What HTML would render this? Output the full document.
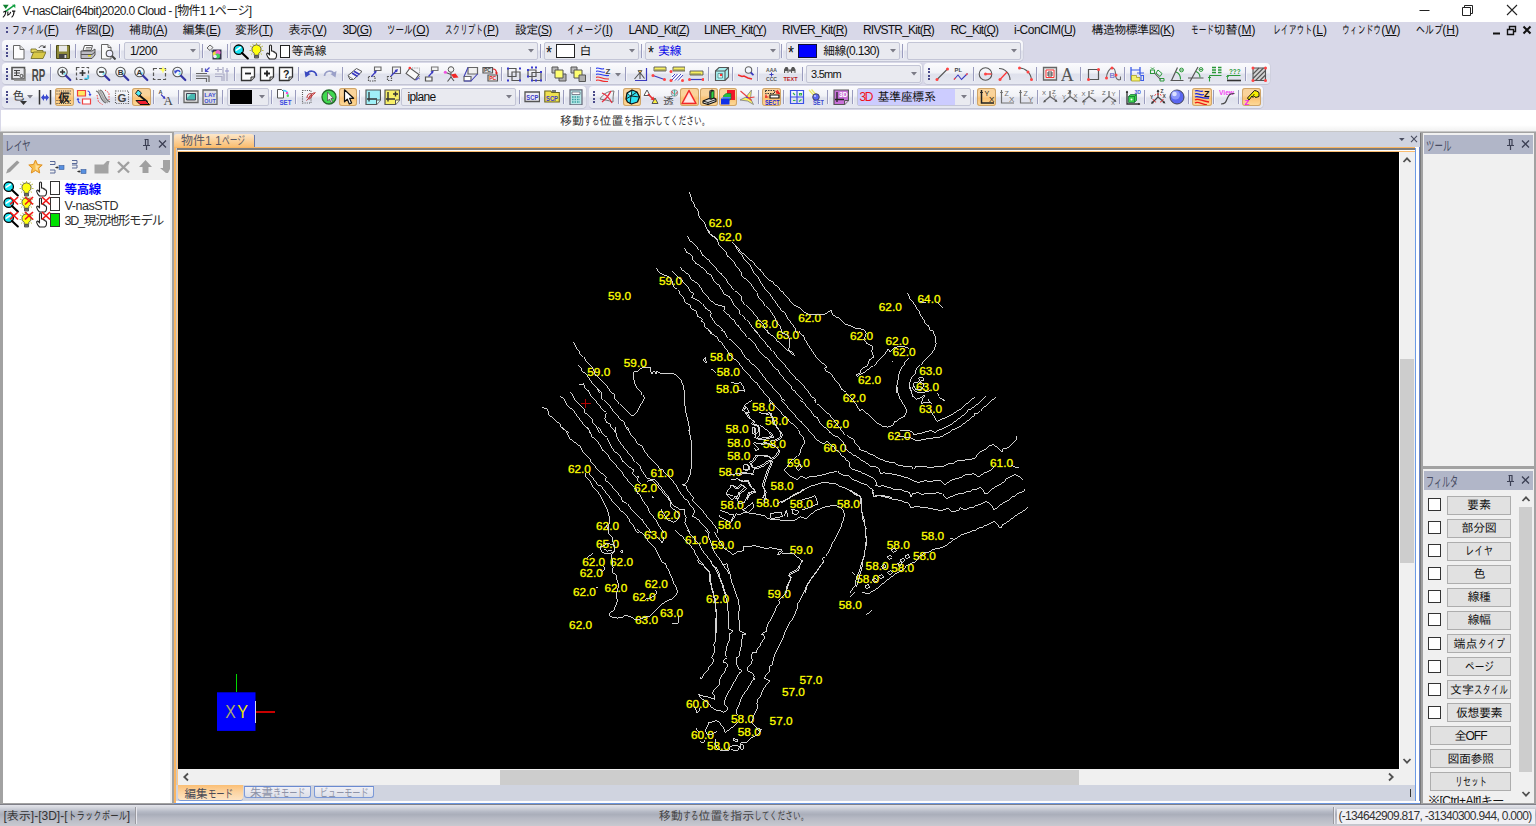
<!DOCTYPE html><html><head><meta charset="utf-8"><title>V-nasClair</title><style>html,body{margin:0;padding:0}body{width:1536px;height:826px;position:relative;overflow:hidden;background:#d8d8e8;font-family:'Liberation Sans','IPAGothic',sans-serif}</style></head><body>
<div style="position:absolute;left:0px;top:0px;width:1536px;height:22px;background:#fff"></div>
<svg style="position:absolute;left:2px;top:3.500px" width="15" height="14.200" viewBox="0 0 18 17"><path d="M1 1h7L4.500 6z" fill="#108030"/><path d="M3.500 9.500L15.500 1" stroke="#10a040" stroke-width="1.800"/><path d="M12 1h4v4z" fill="#10a040"/><path d="M1.500 10l3-1.500M4.500 8.500c0 4-1 6-3.500 7.500M7 9v4.500c2-.5 3-2 3.500-4M12 8.500h4M14.500 8.500c0 4-1 6-3 7.500" stroke="#111" stroke-width="1.300" fill="none"/></svg>
<div id="t1" style="position:absolute;left:22.5px;top:3.1999999999999993px;font:12px/16px 'Liberation Sans','Noto Sans CJK JP',sans-serif;color:#1c1c1c;white-space:nowrap;letter-spacing:-0.608px;">V-nasClair(64bit)2020.0 Cloud - [物件1 1ページ]</div>
<svg style="position:absolute;left:1410px;top:0" width="126" height="22" viewBox="0 0 126 22"><path d="M9.5 10.5h10" stroke="#222" fill="none"/><path d="M52.5 7.5h8v8h-8zM54.5 7.5v-2h8v8h-2" stroke="#222" fill="none"/><path d="M97 5l10 10M107 5l-10 10" stroke="#222" fill="none" stroke-width="1.1"/></svg>
<div style="position:absolute;left:6px;top:27px;width:2px;height:2px;background:#4a4a8a"></div>
<div style="position:absolute;left:6px;top:31px;width:2px;height:2px;background:#4a4a8a"></div>
<div id="t2" style="position:absolute;left:12px;top:21.7px;font:12px/16px 'Liberation Sans','IPAGothic',sans-serif;color:#111;white-space:nowrap;"><span style="display:inline-block;transform:scaleX(0.6595);transform-origin:0 50%;margin-right:-16.344px">ファイル</span>(<u>F</u>)</div>
<div id="t3" style="position:absolute;left:75px;top:21.7px;font:12px/16px 'Liberation Sans','IPAGothic',sans-serif;color:#111;white-space:nowrap;letter-spacing:-0.334px;">作図(<u>D</u>)</div>
<div id="t4" style="position:absolute;left:129px;top:21.7px;font:12px/16px 'Liberation Sans','IPAGothic',sans-serif;color:#111;white-space:nowrap;letter-spacing:-0.303px;">補助(<u>A</u>)</div>
<div id="t5" style="position:absolute;left:182.5px;top:21.7px;font:12px/16px 'Liberation Sans','IPAGothic',sans-serif;color:#111;white-space:nowrap;letter-spacing:-0.403px;">編集(<u>E</u>)</div>
<div id="t6" style="position:absolute;left:235px;top:21.7px;font:12px/16px 'Liberation Sans','IPAGothic',sans-serif;color:#111;white-space:nowrap;letter-spacing:-0.269px;">変形(<u>T</u>)</div>
<div id="t7" style="position:absolute;left:288.5px;top:21.7px;font:12px/16px 'Liberation Sans','IPAGothic',sans-serif;color:#111;white-space:nowrap;letter-spacing:-0.403px;">表示(<u>V</u>)</div>
<div id="t8" style="position:absolute;left:342.5px;top:21.7px;font:12px/16px 'Liberation Sans','IPAGothic',sans-serif;color:#111;white-space:nowrap;letter-spacing:-0.738px;">3D(<u>G</u>)</div>
<div id="t9" style="position:absolute;left:386.5px;top:21.7px;font:12px/16px 'Liberation Sans','IPAGothic',sans-serif;color:#111;white-space:nowrap;"><span style="display:inline-block;transform:scaleX(0.7127);transform-origin:0 50%;margin-right:-10.344px">ツール</span>(<u>O</u>)</div>
<div id="t10" style="position:absolute;left:445px;top:21.7px;font:12px/16px 'Liberation Sans','IPAGothic',sans-serif;color:#111;white-space:nowrap;"><span style="display:inline-block;transform:scaleX(0.6331);transform-origin:0 50%;margin-right:-22.016px">スクリプト</span>(<u>P</u>)</div>
<div id="t11" style="position:absolute;left:515px;top:21.7px;font:12px/16px 'Liberation Sans','IPAGothic',sans-serif;color:#111;white-space:nowrap;letter-spacing:-0.703px;">設定(<u>S</u>)</div>
<div id="t12" style="position:absolute;left:566.5px;top:21.7px;font:12px/16px 'Liberation Sans','IPAGothic',sans-serif;color:#111;white-space:nowrap;"><span style="display:inline-block;transform:scaleX(0.7324);transform-origin:0 50%;margin-right:-12.844px">イメージ</span>(<u>I</u>)</div>
<div id="t13" style="position:absolute;left:628.5px;top:21.7px;font:12px/16px 'Liberation Sans','IPAGothic',sans-serif;color:#111;white-space:nowrap;letter-spacing:-0.685px;">LAND_Kit(<u>Z</u>)</div>
<div id="t14" style="position:absolute;left:704px;top:21.7px;font:12px/16px 'Liberation Sans','IPAGothic',sans-serif;color:#111;white-space:nowrap;letter-spacing:-0.837px;">LINER_Kit(<u>Y</u>)</div>
<div id="t15" style="position:absolute;left:782px;top:21.7px;font:12px/16px 'Liberation Sans','IPAGothic',sans-serif;color:#111;white-space:nowrap;letter-spacing:-0.753px;">RIVER_Kit(<u>R</u>)</div>
<div id="t16" style="position:absolute;left:863px;top:21.7px;font:12px/16px 'Liberation Sans','IPAGothic',sans-serif;color:#111;white-space:nowrap;letter-spacing:-0.797px;">RIVSTR_Kit(<u>R</u>)</div>
<div id="t17" style="position:absolute;left:950.5px;top:21.7px;font:12px/16px 'Liberation Sans','IPAGothic',sans-serif;color:#111;white-space:nowrap;letter-spacing:-0.873px;">RC_Kit(<u>Q</u>)</div>
<div id="t18" style="position:absolute;left:1014px;top:21.7px;font:12px/16px 'Liberation Sans','IPAGothic',sans-serif;color:#111;white-space:nowrap;letter-spacing:-0.531px;">i-ConCIM(<u>U</u>)</div>
<div id="t19" style="position:absolute;left:1091.5px;top:21.7px;font:12px/16px 'Liberation Sans','IPAGothic',sans-serif;color:#111;white-space:nowrap;letter-spacing:-0.613px;">構造物標準図(<u>K</u>)</div>
<div id="t20" style="position:absolute;left:1190.5px;top:21.7px;font:12px/16px 'Liberation Sans','IPAGothic',sans-serif;color:#111;white-space:nowrap;"><span style="display:inline-block;transform:scaleX(0.6389);transform-origin:0 50%;margin-right:-13.000px">モード</span>切替(<u>M</u>)</div>
<div id="t21" style="position:absolute;left:1273px;top:21.7px;font:12px/16px 'Liberation Sans','IPAGothic',sans-serif;color:#111;white-space:nowrap;"><span style="display:inline-block;transform:scaleX(0.6552);transform-origin:0 50%;margin-right:-20.687px">レイアウト</span>(<u>L</u>)</div>
<div id="t22" style="position:absolute;left:1342px;top:21.7px;font:12px/16px 'Liberation Sans','IPAGothic',sans-serif;color:#111;white-space:nowrap;"><span style="display:inline-block;transform:scaleX(0.6529);transform-origin:0 50%;margin-right:-20.828px">ウィンドウ</span>(<u>W</u>)</div>
<div id="t23" style="position:absolute;left:1415.5px;top:21.7px;font:12px/16px 'Liberation Sans','IPAGothic',sans-serif;color:#111;white-space:nowrap;"><span style="display:inline-block;transform:scaleX(0.7452);transform-origin:0 50%;margin-right:-9.172px">ヘルプ</span>(<u>H</u>)</div>
<svg style="position:absolute;left:1488px;top:23px" width="48" height="16" viewBox="0 0 48 16"><path d="M5 10.5h7" stroke="#111" stroke-width="2" fill="none"/><path d="M19.5 6.5h6v5h-6zM21.5 6v-2.500h6v5h-2" stroke="#111" stroke-width="1.4" fill="none"/><path d="M35.5 3.500l7 7M42.500 3.500l-7 7" stroke="#111" stroke-width="2" fill="none"/></svg>
<div style="position:absolute;left:2px;top:39.6px;width:1021px;height:21.5px;border-radius:4px;background:linear-gradient(#fbfbfd 0%,#f1f2f7 45%,#dfe1ec 55%,#e6e8f1 100%);box-shadow:0 1px 0 #c2c4d4, 1px 0 0 #cfd0de;"></div>
<div style="position:absolute;left:6px;top:44.5px;width:2px;height:2px;background:#4a4a8a"></div>
<div style="position:absolute;left:6px;top:48.0px;width:2px;height:2px;background:#4a4a8a"></div>
<div style="position:absolute;left:6px;top:51.5px;width:2px;height:2px;background:#4a4a8a"></div>
<div style="position:absolute;left:6px;top:55.0px;width:2px;height:2px;background:#4a4a8a"></div>
<svg style="position:absolute;left:10.5px;top:44px" width="16" height="16" viewBox="0 0 16 16"><path d="M2.500 1.500h6.500l4 4v9.500h-10.500z" fill="#fdfdfd" stroke="#666"/><path d="M9 1.500v4h4" fill="#ddd" stroke="#666"/></svg>
<svg style="position:absolute;left:30px;top:44px" width="16" height="16" viewBox="0 0 16 16"><path d="M1 5h5l1 1.500h6v2H1z" fill="#e8d860" stroke="#6a6420" stroke-width=".8"/><path d="M1 14.500L3.500 8h12.500L13 14.500z" fill="#d8c848" stroke="#6a6420" stroke-width=".8"/><path d="M9 4c1-2.500 4-3 5.500-1" stroke="#444" fill="none"/><path d="M15.500 1v3h-3z" fill="#444"/></svg>
<svg style="position:absolute;left:55px;top:44px" width="16" height="16" viewBox="0 0 16 16"><path d="M1.500 1.500h13v13h-13z" fill="#8c8838" stroke="#4a4818"/><path d="M4 1.500h8v6H4z" fill="#e8e8e8"/><path d="M4 10h8v4.500H4z" fill="#444"/><path d="M9.500 11h1.800v3h-1.800z" fill="#ddd"/></svg>
<svg style="position:absolute;left:80px;top:44px" width="16" height="16" viewBox="0 0 16 16"><path d="M4.500 1.500h8l-1.500 5h-8z" fill="#fff" stroke="#555"/><path d="M6 3.500h5M5.500 5h5" stroke="#666" stroke-width=".8"/><path d="M1 7h11l3-2v6l-3 3.500H1z" fill="#bdbdc4" stroke="#555"/><path d="M1 10.500h11l3-2.500" stroke="#555" fill="none"/><path d="M8 11.800h3" stroke="#e8e000" stroke-width="1.300"/></svg>
<svg style="position:absolute;left:100px;top:44px" width="16" height="16" viewBox="0 0 16 16"><path d="M1.500 .5h6.500l3 3v11.500h-9.500z" fill="#fafafa" stroke="#666"/><path d="M8 .5v3h3" fill="#ddd" stroke="#666"/><circle cx="9.500" cy="9.500" r="3.300" fill="#eef" stroke="#555" stroke-width="1.100"/><path d="M12 12l3.500 3.500" stroke="#444" stroke-width="2"/></svg>
<div style="position:absolute;left:49.5px;top:44px;width:1px;height:14px;background:#9a9cbe"></div><div style="position:absolute;left:50.5px;top:44px;width:1px;height:14px;background:#f4f4fa"></div>
<div style="position:absolute;left:74.5px;top:44px;width:1px;height:14px;background:#9a9cbe"></div><div style="position:absolute;left:75.5px;top:44px;width:1px;height:14px;background:#f4f4fa"></div>
<div style="position:absolute;left:119.0px;top:44px;width:1px;height:14px;background:#9a9cbe"></div><div style="position:absolute;left:120.0px;top:44px;width:1px;height:14px;background:#f4f4fa"></div>
<div style="position:absolute;left:201.5px;top:44px;width:1px;height:14px;background:#9a9cbe"></div><div style="position:absolute;left:202.5px;top:44px;width:1px;height:14px;background:#f4f4fa"></div>
<div style="position:absolute;left:226.5px;top:44px;width:1px;height:14px;background:#9a9cbe"></div><div style="position:absolute;left:227.5px;top:44px;width:1px;height:14px;background:#f4f4fa"></div>
<div style="position:absolute;left:539.5px;top:44px;width:1px;height:14px;background:#9a9cbe"></div><div style="position:absolute;left:540.5px;top:44px;width:1px;height:14px;background:#f4f4fa"></div>
<div style="position:absolute;left:641.0px;top:44px;width:1px;height:14px;background:#9a9cbe"></div><div style="position:absolute;left:642.0px;top:44px;width:1px;height:14px;background:#f4f4fa"></div>
<div style="position:absolute;left:781.0px;top:44px;width:1px;height:14px;background:#9a9cbe"></div><div style="position:absolute;left:782.0px;top:44px;width:1px;height:14px;background:#f4f4fa"></div>
<div style="position:absolute;left:902.0px;top:44px;width:1px;height:14px;background:#9a9cbe"></div><div style="position:absolute;left:903.0px;top:44px;width:1px;height:14px;background:#f4f4fa"></div>
<div style="position:absolute;left:123.5px;top:41.5px;width:76px;height:18px;box-sizing:border-box;border:1px solid #c3c5d6;border-radius:2px;background:#e9eaf0;"></div>
<svg style="position:absolute;left:189.5px;top:49.0px" width="6" height="3.500" viewBox="0 0 6 3.500"><path d="M0 0h6L3 3.500z" fill="#7b7b86"/></svg>
<div id="t24" style="position:absolute;left:130px;top:43.0px;font:12px/16px 'Liberation Sans','IPAGothic',sans-serif;color:#111;white-space:nowrap;letter-spacing:-0.606px;">1/200</div>
<svg style="position:absolute;left:206px;top:44px" width="16" height="16" viewBox="0 0 16 16"><path d="M1 4l3-3 3 2.500-3 3z" fill="#eee" stroke="#555" stroke-width=".9"/><path d="M5.500 6.500l2 2" stroke="#36a" stroke-width="1.300"/><path d="M6.500 5.500h9v10h-9z" fill="#303048"/><circle cx="9.500" cy="10" r="2.700" fill="#f0e040"/><circle cx="12" cy="8.500" r="2.500" fill="#f060d0"/><circle cx="11.500" cy="12" r="2.500" fill="#40d060"/><circle cx="9" cy="12.500" r="1.800" fill="#e8e8ff"/></svg>
<div style="position:absolute;left:230px;top:41.5px;width:307.5px;height:18px;box-sizing:border-box;border:1px solid #c3c5d6;border-radius:2px;background:#e9eaf0;"></div>
<svg style="position:absolute;left:527.5px;top:49.0px" width="6" height="3.500" viewBox="0 0 6 3.500"><path d="M0 0h6L3 3.500z" fill="#7b7b86"/></svg>
<svg style="position:absolute;left:233px;top:43.5px" width="16" height="16" viewBox="0 0 16 16"><circle cx="5.700" cy="5.700" r="4.700" fill="#18e4f4" stroke="#000" stroke-width="1.300"/><path d="M3.300 6.200l4-2.700" stroke="#fff" stroke-width="1.600" stroke-linecap="round"/><path d="M9 9l5.800 5.500" stroke="#000" stroke-width="2.100" stroke-linecap="round"/></svg>
<svg style="position:absolute;left:248.5px;top:43px" width="16" height="16" viewBox="0 0 16 16"><path d="M1 3l1.800 1M7.500 0v1.500M14 3l-1.800 1M.5 7.500h1.500M14.500 7.500h-1.500M2 11.500l1.300-1M13 11.500l-1.300-1M3.500 .8l1 1.500M11.500 .8l-1 1.500" stroke="#b8b830" stroke-width=".9"/><path d="M7.500 1.800a4.600 4.600 0 0 1 2.300 8.600v1.800h-4.600v-1.800a4.600 4.600 0 0 1 2.300-8.600z" fill="#ffff10" stroke="#555" stroke-width=".9"/><path d="M5.500 12.500h4v2.500h-4z" fill="#999" stroke="#444" stroke-width=".8"/><path d="M5.500 13.800h4" stroke="#333" stroke-width=".7"/></svg>
<svg style="position:absolute;left:265.5px;top:43.5px" width="16" height="16" viewBox="0 0 16 16"><path d="M3.500 15c-1-1-2.500-2.500-2.800-4.500-.2-1.200 1-1.800 1.800-.8l1 1.300V2c0-1.400 2-1.400 2 0v5h.8c.8 0 1.200.3 1.300.9.900-.1 1.400.3 1.500 1 .9 0 1.400.5 1.400 1.400V12c0 1.500-.8 2.500-1.800 3z" fill="#fff" stroke="#222" stroke-width="1.100" stroke-linejoin="round"/></svg>
<div style="position:absolute;left:280px;top:44.5px;width:10px;height:13.5px;box-sizing:border-box;border:1px solid #222;background:#fff"></div>
<div id="t25" style="position:absolute;left:291.5px;top:43.2px;font:12px/16px 'Liberation Sans','IPAGothic',sans-serif;color:#111;white-space:nowrap;letter-spacing:-0.500px;">等高線</div>
<div style="position:absolute;left:543.5px;top:41.5px;width:95.5px;height:18px;box-sizing:border-box;border:1px solid #c3c5d6;border-radius:2px;background:#e9eaf0;"></div>
<svg style="position:absolute;left:629.0px;top:49.0px" width="6" height="3.500" viewBox="0 0 6 3.500"><path d="M0 0h6L3 3.500z" fill="#7b7b86"/></svg>
<div id="t26" style="position:absolute;left:545.5px;top:43.3px;font:18px/20px 'Liberation Sans','IPAGothic',sans-serif;color:#111;white-space:nowrap;transform:scaleX(.85);transform-origin:0 0;">*</div>
<div style="position:absolute;left:556px;top:44px;width:19px;height:13.5px;box-sizing:border-box;border:1px solid #222;background:#fff"></div>
<div id="t27" style="position:absolute;left:579.5px;top:43.2px;font:12px/16px 'Liberation Sans','IPAGothic',sans-serif;color:#111;white-space:nowrap;">白</div>
<div style="position:absolute;left:645px;top:41.5px;width:134.5px;height:18px;box-sizing:border-box;border:1px solid #c3c5d6;border-radius:2px;background:#e9eaf0;"></div>
<svg style="position:absolute;left:769.5px;top:49.0px" width="6" height="3.500" viewBox="0 0 6 3.500"><path d="M0 0h6L3 3.500z" fill="#7b7b86"/></svg>
<div id="t28" style="position:absolute;left:647.5px;top:43.3px;font:18px/20px 'Liberation Sans','IPAGothic',sans-serif;color:#111;white-space:nowrap;transform:scaleX(.85);transform-origin:0 0;">*</div>
<div id="t29" style="position:absolute;left:658px;top:43.2px;font:12px/16px 'Liberation Sans','IPAGothic',sans-serif;color:#0000e8;white-space:nowrap;letter-spacing:-0.500px;">実線</div>
<div style="position:absolute;left:785.5px;top:41.5px;width:114.5px;height:18px;box-sizing:border-box;border:1px solid #c3c5d6;border-radius:2px;background:#e9eaf0;"></div>
<svg style="position:absolute;left:890.0px;top:49.0px" width="6" height="3.500" viewBox="0 0 6 3.500"><path d="M0 0h6L3 3.500z" fill="#7b7b86"/></svg>
<div id="t30" style="position:absolute;left:787.5px;top:43.3px;font:18px/20px 'Liberation Sans','IPAGothic',sans-serif;color:#111;white-space:nowrap;transform:scaleX(.85);transform-origin:0 0;">*</div>
<div style="position:absolute;left:797.5px;top:44px;width:19.5px;height:13.5px;box-sizing:border-box;border:1px solid #113;background:#0000ff"></div>
<div id="t31" style="position:absolute;left:823px;top:43.2px;font:12px/16px 'Liberation Sans','IPAGothic',sans-serif;color:#111;white-space:nowrap;letter-spacing:-0.670px;">細線(0.130)</div>
<div style="position:absolute;left:906.5px;top:41.5px;width:114.5px;height:18px;box-sizing:border-box;border:1px solid #c3c5d6;border-radius:2px;background:#e9eaf0;"></div>
<svg style="position:absolute;left:1011.0px;top:49.0px" width="6" height="3.500" viewBox="0 0 6 3.500"><path d="M0 0h6L3 3.500z" fill="#7b7b86"/></svg>
<div style="position:absolute;left:2px;top:62.8px;width:920px;height:21.5px;border-radius:4px;background:linear-gradient(#fbfbfd 0%,#f1f2f7 45%,#dfe1ec 55%,#e6e8f1 100%);box-shadow:0 1px 0 #c2c4d4, 1px 0 0 #cfd0de;"></div>
<div style="position:absolute;left:6px;top:67.5px;width:2px;height:2px;background:#4a4a8a"></div>
<div style="position:absolute;left:6px;top:71.0px;width:2px;height:2px;background:#4a4a8a"></div>
<div style="position:absolute;left:6px;top:74.5px;width:2px;height:2px;background:#4a4a8a"></div>
<div style="position:absolute;left:6px;top:78.0px;width:2px;height:2px;background:#4a4a8a"></div>
<svg style="position:absolute;left:11px;top:66px" width="16" height="16" viewBox="0 0 16 16"><path d="M1 1.500h12.500v11.500H1z" fill="#e8e8ec" stroke="#555" stroke-width="1.600"/><path d="M14.200 3v11.200H3" stroke="#999" stroke-width="1.400" fill="none"/><path d="M3 4.500h6M3 7h6M5.500 4.500v5M3 9.500h5" stroke="#444" stroke-width="1.100" fill="none"/><circle cx="10.500" cy="10" r="1.600" fill="none" stroke="#444"/></svg>
<svg style="position:absolute;left:31px;top:66px" width="16" height="16" viewBox="0 0 16 16"><text x="0.8" y="15" font-family="'Liberation Sans',sans-serif" font-size="16.5" fill="#4a4a4a" font-weight="bold" textLength="13.5" lengthAdjust="spacingAndGlyphs" >RP</text></svg>
<svg style="position:absolute;left:56px;top:66px" width="16" height="16" viewBox="0 0 16 16"><circle cx="6.500" cy="6" r="4.700" fill="#f4f8fb" stroke="#555" stroke-width="1.100"/><path d="M7.500 8.500a3 3 0 0 0 2-2" stroke="#5de" stroke-width="1.200" fill="none"/><path d="M10 9.700l4.300 4.300" stroke="#3535a5" stroke-width="2.200" stroke-linecap="round"/><path d="M4 6h5M6.500 3.500v5" stroke="#333" stroke-width="1.500"/></svg>
<svg style="position:absolute;left:75px;top:66px" width="16" height="16" viewBox="0 0 16 16"><path d="M1.500 1.500h12v12h-12z" fill="none" stroke="#555" stroke-width="1.200" stroke-dasharray="3 2"/><path d="M4.500 7h6M7.500 4v6" stroke="#333" stroke-width="1.600"/><path d="M9.500 12.500h3.500v-3.500" stroke="#4ce" stroke-width="1.500" fill="none"/></svg>
<svg style="position:absolute;left:95px;top:66px" width="16" height="16" viewBox="0 0 16 16"><circle cx="6.500" cy="6" r="4.700" fill="#f4f8fb" stroke="#555" stroke-width="1.100"/><path d="M7.500 8.500a3 3 0 0 0 2-2" stroke="#5de" stroke-width="1.200" fill="none"/><path d="M10 9.700l4.300 4.300" stroke="#3535a5" stroke-width="2.200" stroke-linecap="round"/><path d="M4 6h5" stroke="#333" stroke-width="1.600"/></svg>
<svg style="position:absolute;left:114px;top:66px" width="16" height="16" viewBox="0 0 16 16"><circle cx="6.500" cy="6" r="4.700" fill="#f4f8fb" stroke="#555" stroke-width="1.100"/><path d="M7.500 8.500a3 3 0 0 0 2-2" stroke="#5de" stroke-width="1.200" fill="none"/><path d="M10 9.700l4.300 4.300" stroke="#3535a5" stroke-width="2.200" stroke-linecap="round"/><text x="3.8" y="9" font-family="'Liberation Sans',sans-serif" font-size="8" fill="#333" font-weight="bold" >B</text></svg>
<svg style="position:absolute;left:133px;top:66px" width="16" height="16" viewBox="0 0 16 16"><circle cx="6.500" cy="6" r="4.700" fill="#f4f8fb" stroke="#555" stroke-width="1.100"/><path d="M7.500 8.500a3 3 0 0 0 2-2" stroke="#5de" stroke-width="1.200" fill="none"/><path d="M10 9.700l4.300 4.300" stroke="#3535a5" stroke-width="2.200" stroke-linecap="round"/><text x="3.6" y="9" font-family="'Liberation Sans',sans-serif" font-size="8" fill="#333" font-weight="bold" >A</text></svg>
<svg style="position:absolute;left:152px;top:66px" width="16" height="16" viewBox="0 0 16 16"><path d="M1.500 2.500h12v11h-12z" fill="none" stroke="#555" stroke-width="1.200" stroke-dasharray="3.500 2"/><path d="M11 0l1 2.800 2.800 1-2.800 1-1 2.800-1-2.800-2.800-1 2.800-1z" fill="#ffff60"/></svg>
<svg style="position:absolute;left:171px;top:66px" width="16" height="16" viewBox="0 0 16 16"><circle cx="6.500" cy="6" r="4.700" fill="#f4f8fb" stroke="#555" stroke-width="1.100"/><path d="M7.500 8.500a3 3 0 0 0 2-2" stroke="#5de" stroke-width="1.200" fill="none"/><path d="M10 9.700l4.300 4.300" stroke="#3535a5" stroke-width="2.200" stroke-linecap="round"/><path d="M4.500 6.500c0-2 3.500-3 4.500-.5" stroke="#3a4ad0" stroke-width="1.500" fill="none"/><path d="M3 4.500l3.500.5-2.500 3z" fill="#3a4ad0"/></svg>
<svg style="position:absolute;left:196px;top:66px" width="16" height="16" viewBox="0 0 16 16"><path d="M0 7.500h11M0 10h13v6M0 12.500h10.500v3.500M6 2v4" stroke="#666" stroke-width="1.200" fill="none"/><path d="M13.500 1.500l-3.500 3.500M9.500 2.500v3h3" stroke="#4a4ac8" stroke-width="1.200" fill="none"/></svg>
<svg style="position:absolute;left:214px;top:66px" width="16" height="16" viewBox="0 0 16 16"><path d="M1 3.500h7M9 1v6M13 2v13M1 8h9v7M1 10.500h7v4.500M4 1v5" stroke="#a9a9c4" stroke-width="1.200" fill="none"/><path d="M11 5h4" stroke="#9a9ad0" stroke-width="1.200"/></svg>
<svg style="position:absolute;left:240px;top:66px" width="16" height="16" viewBox="0 0 16 16"><path d="M1.500 1.500h13v9.500l-3.500 3.500h-9.500z" fill="#fcfcfc" stroke="#333" stroke-width="1.300"/><path d="M14.500 11h-3.500v3.500" fill="#ccc" stroke="#333" stroke-width="1"/><path d="M5 7.500h6" stroke="#222" stroke-width="1.800"/></svg>
<svg style="position:absolute;left:259px;top:66px" width="16" height="16" viewBox="0 0 16 16"><path d="M1.500 1.500h13v9.500l-3.500 3.500h-9.500z" fill="#fcfcfc" stroke="#333" stroke-width="1.300"/><path d="M14.500 11h-3.500v3.500" fill="#ccc" stroke="#333" stroke-width="1"/><path d="M5 7.500h6M8 4.500v6" stroke="#222" stroke-width="1.800"/></svg>
<svg style="position:absolute;left:278px;top:66px" width="16" height="16" viewBox="0 0 16 16"><path d="M1.500 1.500h13v9.500l-3.500 3.500h-9.500z" fill="#fcfcfc" stroke="#333" stroke-width="1.300"/><path d="M14.500 11h-3.500v3.500" fill="#ccc" stroke="#333" stroke-width="1"/><text x="5" y="11.5" font-family="'Liberation Sans',sans-serif" font-size="10.5" fill="#222" font-weight="bold" >?</text></svg>
<svg style="position:absolute;left:303px;top:66px" width="16" height="16" viewBox="0 0 16 16"><path d="M4 8c2-4 9-4 9.500 2" stroke="#3a4ac0" stroke-width="1.700" fill="none"/><path d="M1.500 5l1 6.500 5-3.500z" fill="#3a4ac0"/></svg>
<svg style="position:absolute;left:322px;top:66px" width="16" height="16" viewBox="0 0 16 16"><path d="M12 8c-2-4-9-4-9.500 2" stroke="#9aa0c8" stroke-width="1.700" fill="none"/><path d="M14.500 5l-1 6.500-5-3.500z" fill="#9aa0c8"/></svg>
<svg style="position:absolute;left:347px;top:66px" width="16" height="16" viewBox="0 0 16 16"><path d="M1 9.500L9.500 2.500l5.500 3-8.500 8H3z" fill="#f4f4f8" stroke="#555" stroke-width="1"/><path d="M5 7l5.500 3.500M7 5.300l5.500 3.300" stroke="#3a3ac0" stroke-width="1.700"/><path d="M1.500 10l5 3.500" stroke="#888" stroke-width="1"/></svg>
<svg style="position:absolute;left:367px;top:66px" width="16" height="16" viewBox="0 0 16 16"><path d="M1.500 10.500h6.500v4.500h-6.500z" fill="none" stroke="#555" stroke-width="1.200" stroke-dasharray="1.500 1"/><path d="M7.500 1h6.500v3.500h-6.500z" fill="#f4f4f4" stroke="#666" stroke-width="1.100"/><path d="M4.500 10.500L9 5.500" stroke="#3a3ac0" stroke-width="1.200"/><path d="M9.800 4.500l-3.300 1 2.300 2.300z" fill="#3a3ac0"/></svg>
<svg style="position:absolute;left:386px;top:66px" width="16" height="16" viewBox="0 0 16 16"><path d="M1.500 10.500h4v4h-4z" fill="none" stroke="#555" stroke-width="1.200" stroke-dasharray="1.500 1"/><path d="M6.500 1h8v6.500h-8z" fill="#f4f4f4" stroke="#666" stroke-width="1.100"/><path d="M5 10l5.500-5.500" stroke="#3a3ac0" stroke-width="1.200"/><path d="M12 3l-3.500 1 2.500 2.500z" fill="#3a3ac0"/></svg>
<svg style="position:absolute;left:405px;top:66px" width="16" height="16" viewBox="0 0 16 16"><path d="M1 7.500L5 2l9 6.500-4 5.500z" fill="#fafafa" stroke="#555" stroke-width="1.100"/><path d="M5 2h9.500v12" fill="none" stroke="#888" stroke-width="1" stroke-dasharray="1 1.200"/><circle cx="4.800" cy="2" r="1.300" fill="#f33"/><path d="M11 14l3-2.500" stroke="#55c" stroke-width="1.200"/></svg>
<svg style="position:absolute;left:424px;top:66px" width="16" height="16" viewBox="0 0 16 16"><path d="M1.500 11h6.500v4h-6.500z" fill="#f4f4f4" stroke="#555" stroke-width="1.200"/><path d="M7.500 1h6.500v3.500h-6.500z" fill="#f4f4f4" stroke="#777" stroke-width="1.100"/><path d="M4.500 10.500L9 5.500" stroke="#3a3ac0" stroke-width="1.200"/><path d="M9.800 4.500l-3.300 1 2.300 2.300z" fill="#3a3ac0"/></svg>
<svg style="position:absolute;left:443px;top:66px" width="16" height="16" viewBox="0 0 16 16"><circle cx="8" cy="3.500" r="2.800" fill="#f4f4f4" stroke="#555" stroke-width="1"/><path d="M8 6.500v4.500M8 11l-3.500 4.500M8 11l3 4M3 6.500l5 2" stroke="#555" stroke-width="1.100" fill="none"/><path d="M8 8.500l4.500-1 3 4-5 .5z" fill="#f02828"/><circle cx="2.300" cy="6.300" r="1.500" fill="#f050e0"/></svg>
<svg style="position:absolute;left:463px;top:66px" width="16" height="16" viewBox="0 0 16 16"><path d="M5 1.500h9.500v6.500H5z" fill="#f0f0f0" stroke="#666" stroke-width="1.200"/><path d="M1 10.500h7v4.500H1z" fill="#fff" stroke="#666" stroke-width="1.200"/><path d="M5 1.500L1 10.500M14.500 8L8 15M1 15h7" stroke="#4040b8" stroke-width="1.100" fill="none"/></svg>
<svg style="position:absolute;left:482px;top:66px" width="16" height="16" viewBox="0 0 16 16"><path d="M1 1.500h9.500v5.500H1z" fill="#e8e8e8" stroke="#555" stroke-width="1.200"/><text x="2" y="6.3" font-family="'Liberation Sans',sans-serif" font-size="5.5" fill="#444" font-weight="bold" textLength="7" lengthAdjust="spacingAndGlyphs" >PC</text><path d="M6 9h9.500v6H6z" fill="#e8e8e8" stroke="#555" stroke-width="1.200"/><text x="7.2" y="14" font-family="'Liberation Sans',sans-serif" font-size="5.5" fill="#e02020" font-weight="bold" textLength="7" lengthAdjust="spacingAndGlyphs" >PC</text><path d="M11 3c3 0 3.500 2 3.500 4.500" stroke="#e02020" stroke-width="1.200" fill="none"/><path d="M13 6.500h3l-1.500 2.500z" fill="#e02020"/></svg>
<svg style="position:absolute;left:506px;top:66px" width="16" height="16" viewBox="0 0 16 16"><path d="M2 2.500h8v8H2z M6 6h8v8.500H6z" fill="none" stroke="#555" stroke-width="1.200"/><rect x="1" y="1.5" width="2" height="2" fill="#3a3ad0"/><rect x="13" y="1.5" width="2" height="2" fill="#3a3ad0"/><rect x="1" y="13.5" width="2" height="2" fill="#3a3ad0"/><rect x="13" y="13.5" width="2" height="2" fill="#3a3ad0"/></svg>
<svg style="position:absolute;left:526px;top:66px" width="16" height="16" viewBox="0 0 16 16"><path d="M2 4h8v6.500H2z M6 6.500h9v8H6z" fill="none" stroke="#555" stroke-width="1.200"/><rect x="1" y="3" width="2" height="2" fill="#3a3ad0"/><rect x="5" y="0.5" width="2" height="2" fill="#3a3ad0"/><rect x="9" y="0.5" width="2" height="2" fill="#3a3ad0"/><rect x="14" y="5" width="2" height="2" fill="#3a3ad0"/><rect x="14" y="13.5" width="2" height="2" fill="#3a3ad0"/><rect x="5" y="13.5" width="2" height="2" fill="#3a3ad0"/><rect x="1" y="9.5" width="2" height="2" fill="#3a3ad0"/><rect x="9" y="13.5" width="2" height="2" fill="#3a3ad0"/></svg>
<svg style="position:absolute;left:551px;top:66px" width="16" height="16" viewBox="0 0 16 16"><path d="M8 8h7v7H8z" fill="#b0b0b0" stroke="#555" stroke-width="1"/><path d="M1 1h6v6H1z" fill="#b8b8b8" stroke="#555" stroke-width="1"/><path d="M4 4h8v8H4z" fill="#ffff70" stroke="#555" stroke-width="1"/></svg>
<svg style="position:absolute;left:570px;top:66px" width="16" height="16" viewBox="0 0 16 16"><path d="M1 1h6v6H1z" fill="#b8b8b8" stroke="#555" stroke-width="1"/><path d="M4 4h8v8H4z" fill="#ffff70" stroke="#555" stroke-width="1"/><path d="M9 9h6.500v6.500H9z" fill="#b0b0b0" stroke="#555" stroke-width="1"/></svg>
<svg style="position:absolute;left:596px;top:66px" width="16" height="16" viewBox="0 0 16 16"><path d="M0 2.500c3-2 5 2 8 0M0 5.500c3-2 5 2 9 .5M0 8.500c3-2 6 2 13 1" stroke="#2a3af0" stroke-width="1.100" fill="none"/><path d="M0 11.500c3-2 6 2 13 1.500M0 14.500c3-2 6 2 12 1" stroke="#f02a2a" stroke-width="1.100" fill="none"/><text x="9.5" y="7.5" font-family="'Liberation Sans',sans-serif" font-size="8" fill="#444" font-weight="bold" >Z</text></svg>
<svg style="position:absolute;left:632px;top:66px" width="16" height="16" viewBox="0 0 16 16"><path d="M3 14.500h11.500V2" stroke="#3a3ac0" stroke-width="1.200" fill="none"/><path d="M6 4.500h4l-1 2H7z" fill="#e8b040" stroke="#555" stroke-width=".8"/><path d="M8 6.500L2.500 13M8 6.500v6.500M8 6.500l4.500 6" stroke="#555" stroke-width="1.100" fill="none"/></svg>
<svg style="position:absolute;left:651px;top:66px" width="16" height="16" viewBox="0 0 16 16"><path d="M3 1h12v4h-12z" fill="#f8f060" stroke="#555" stroke-width=".9"/><path d="M5 3v2M7 3v2M9 3v2M11 3v2M13 3v2" stroke="#555" stroke-width=".7"/><path d="M2 9.500l11.500 4" stroke="#3a3ac0" stroke-width="1.200"/><circle cx="2" cy="9.5" r="1.500" fill="#f44"/><circle cx="13.5" cy="13.5" r="1.500" fill="#f44"/></svg>
<svg style="position:absolute;left:669px;top:66px" width="16" height="16" viewBox="0 0 16 16"><path d="M4 1h12v4h-12z" fill="#f8f060" stroke="#555" stroke-width=".9"/><path d="M6 3v2M8 3v2M10 3v2M12 3v2M14 3v2" stroke="#555" stroke-width=".7"/><path d="M2.500 8h11v6.500h-11z" fill="#fff"/><path d="M3 14l5.500-6M6 14.500l6-6.500M9 14.500l5-5.500M3 11l3-3" stroke="#3a3ac0" stroke-width="1"/><circle cx="2" cy="5.5" r="1.500" fill="#f44"/><circle cx="2" cy="14.5" r="1.500" fill="#f44"/><circle cx="13.5" cy="14.5" r="1.500" fill="#f44"/></svg>
<svg style="position:absolute;left:688px;top:66px" width="16" height="16" viewBox="0 0 16 16"><path d="M2 5h13v4h-13z" fill="#f8f060" stroke="#555" stroke-width=".9"/><path d="M4 7v2M6 7v2M8 7v2M10 7v2M12 7v2" stroke="#555" stroke-width=".7"/><path d="M1.500 13.500h14" stroke="#3a3ac0" stroke-width="1.200"/><circle cx="1.5" cy="13.5" r="1.500" fill="#f44"/><circle cx="15" cy="13.5" r="1.500" fill="#f44"/></svg>
<svg style="position:absolute;left:714px;top:66px" width="16" height="16" viewBox="0 0 16 16"><path d="M1.500 5L5 1.500h9.500v9.500L11 14.500H1.500z" fill="#a8f0f0" stroke="#555" stroke-width="1.100"/><path d="M1.500 5H11v9.500M11 5l3.500-3.500" stroke="#555" stroke-width="1.100" fill="none"/><path d="M4 7.500h4.500v4.500H4z" fill="#d8ffff" stroke="#477" stroke-width=".7"/><circle cx="7" cy="9" r="1.300" fill="#f33"/></svg>
<svg style="position:absolute;left:738px;top:66px" width="16" height="16" viewBox="0 0 16 16"><circle cx="10.500" cy="4" r="3.200" fill="#f4f8ff" stroke="#666" stroke-width="1.100"/><path d="M12.800 6.500l2.700 2.700" stroke="#3a3ac0" stroke-width="1.800"/><path d="M0 9l4 1.500 2-.5 4 2 4 1" stroke="#f02a2a" stroke-width="1.500" fill="none"/></svg>
<svg style="position:absolute;left:764px;top:66px" width="16" height="16" viewBox="0 0 16 16"><text x="2" y="5.5" font-family="'Liberation Sans',sans-serif" font-size="5.5" fill="#555" font-weight="bold" textLength="11" lengthAdjust="spacingAndGlyphs" >AAA</text><text x="2" y="15" font-family="'Liberation Sans',sans-serif" font-size="5.5" fill="#555" font-weight="bold" textLength="11" lengthAdjust="spacingAndGlyphs" >CCC</text><path d="M5.500 8.500h4M7.500 6.500v4" stroke="#3a3ac0" stroke-width="1"/></svg>
<svg style="position:absolute;left:782px;top:66px" width="16" height="16" viewBox="0 0 16 16"><path d="M2 7V3.500L3.500 1h2L6.500 3v4zM9 7V3L10 1h2l1.500 2.500V7z" fill="#555"/><path d="M6.500 3.500h2.500v2H6.500z" fill="#666"/><path d="M3 5h2.500v2H3zM10 5h2.500v2H10z" fill="#ddd"/><text x="1.5" y="15" font-family="'Liberation Sans',sans-serif" font-size="6" fill="#b82020" font-weight="bold" textLength="14" lengthAdjust="spacingAndGlyphs" >TEXT</text></svg>
<div style="position:absolute;left:49.5px;top:67px;width:1px;height:14px;background:#9a9cbe"></div><div style="position:absolute;left:50.5px;top:67px;width:1px;height:14px;background:#f4f4fa"></div>
<div style="position:absolute;left:189.5px;top:67px;width:1px;height:14px;background:#9a9cbe"></div><div style="position:absolute;left:190.5px;top:67px;width:1px;height:14px;background:#f4f4fa"></div>
<div style="position:absolute;left:233.5px;top:67px;width:1px;height:14px;background:#9a9cbe"></div><div style="position:absolute;left:234.5px;top:67px;width:1px;height:14px;background:#f4f4fa"></div>
<div style="position:absolute;left:297.5px;top:67px;width:1px;height:14px;background:#9a9cbe"></div><div style="position:absolute;left:298.5px;top:67px;width:1px;height:14px;background:#f4f4fa"></div>
<div style="position:absolute;left:341.5px;top:67px;width:1px;height:14px;background:#9a9cbe"></div><div style="position:absolute;left:342.5px;top:67px;width:1px;height:14px;background:#f4f4fa"></div>
<div style="position:absolute;left:500.5px;top:67px;width:1px;height:14px;background:#9a9cbe"></div><div style="position:absolute;left:501.5px;top:67px;width:1px;height:14px;background:#f4f4fa"></div>
<div style="position:absolute;left:545.0px;top:67px;width:1px;height:14px;background:#9a9cbe"></div><div style="position:absolute;left:546.0px;top:67px;width:1px;height:14px;background:#f4f4fa"></div>
<div style="position:absolute;left:589.5px;top:67px;width:1px;height:14px;background:#9a9cbe"></div><div style="position:absolute;left:590.5px;top:67px;width:1px;height:14px;background:#f4f4fa"></div>
<div style="position:absolute;left:624.5px;top:67px;width:1px;height:14px;background:#9a9cbe"></div><div style="position:absolute;left:625.5px;top:67px;width:1px;height:14px;background:#f4f4fa"></div>
<div style="position:absolute;left:707.5px;top:67px;width:1px;height:14px;background:#9a9cbe"></div><div style="position:absolute;left:708.5px;top:67px;width:1px;height:14px;background:#f4f4fa"></div>
<div style="position:absolute;left:732.0px;top:67px;width:1px;height:14px;background:#9a9cbe"></div><div style="position:absolute;left:733.0px;top:67px;width:1px;height:14px;background:#f4f4fa"></div>
<div style="position:absolute;left:757.0px;top:67px;width:1px;height:14px;background:#9a9cbe"></div><div style="position:absolute;left:758.0px;top:67px;width:1px;height:14px;background:#f4f4fa"></div>
<div style="position:absolute;left:801.5px;top:67px;width:1px;height:14px;background:#9a9cbe"></div><div style="position:absolute;left:802.5px;top:67px;width:1px;height:14px;background:#f4f4fa"></div>
<svg style="position:absolute;left:615px;top:73px" width="6" height="3.500" viewBox="0 0 6 3.500"><path d="M0 0h6L3 3.500z" fill="#7b7b86"/></svg>
<div style="position:absolute;left:805.5px;top:64.5px;width:115px;height:18px;box-sizing:border-box;border:1px solid #c3c5d6;border-radius:2px;background:#e9eaf0;"></div>
<svg style="position:absolute;left:910.5px;top:72.0px" width="6" height="3.500" viewBox="0 0 6 3.500"><path d="M0 0h6L3 3.500z" fill="#7b7b86"/></svg>
<div id="t32" style="position:absolute;left:811px;top:66.5px;font:11px/15px 'Liberation Sans','IPAGothic',sans-serif;color:#111;white-space:nowrap;letter-spacing:-0.725px;">3.5mm</div>
<div style="position:absolute;left:924px;top:62.8px;width:345.5px;height:21.5px;border-radius:4px;background:linear-gradient(#fbfbfd 0%,#f1f2f7 45%,#dfe1ec 55%,#e6e8f1 100%);box-shadow:0 1px 0 #c2c4d4, 1px 0 0 #cfd0de;"></div>
<div style="position:absolute;left:928px;top:67.5px;width:2px;height:2px;background:#4a4a8a"></div>
<div style="position:absolute;left:928px;top:71.0px;width:2px;height:2px;background:#4a4a8a"></div>
<div style="position:absolute;left:928px;top:74.5px;width:2px;height:2px;background:#4a4a8a"></div>
<div style="position:absolute;left:928px;top:78.0px;width:2px;height:2px;background:#4a4a8a"></div>
<svg style="position:absolute;left:935px;top:66px" width="16" height="16" viewBox="0 0 16 16"><path d="M2 13.500L12.500 3" stroke="#555" stroke-width="1.100"/><circle cx="2" cy="13.5" r="1.500" fill="#f44"/><circle cx="12.5" cy="3" r="1.500" fill="#f44"/></svg>
<svg style="position:absolute;left:953px;top:66px" width="16" height="16" viewBox="0 0 16 16"><text x="1.5" y="5.5" font-family="'Liberation Sans',sans-serif" font-size="5.5" fill="#444" font-weight="bold" textLength="7.5" lengthAdjust="spacingAndGlyphs" >PL</text><path d="M1 13.500l4-4.500 3.500 4.500 6-6" stroke="#3a3ac0" stroke-width="1.100" fill="none"/><path d="M1 13.500l1.500-1.700M13 9l1.500-1.500" stroke="#f44" stroke-width="1.200"/></svg>
<svg style="position:absolute;left:978px;top:66px" width="16" height="16" viewBox="0 0 16 16"><circle cx="7.500" cy="8" r="6.300" fill="none" stroke="#555" stroke-width="1.100"/><path d="M7.500 8h6" stroke="#f33" stroke-width="1.400"/><circle cx="7.5" cy="8" r="1.500" fill="#f44"/></svg>
<svg style="position:absolute;left:997px;top:66px" width="16" height="16" viewBox="0 0 16 16"><path d="M2 2.500c6 0 11 5 11 11.500" fill="none" stroke="#555" stroke-width="1.100"/><path d="M3 13.500L10 6" stroke="#f33" stroke-width="1.200"/><circle cx="3" cy="13.5" r="1.500" fill="#f44"/></svg>
<svg style="position:absolute;left:1017px;top:66px" width="16" height="16" viewBox="0 0 16 16"><path d="M2.500 2c6 0 11.500 5 12 12" fill="none" stroke="#555" stroke-width="1.100"/><circle cx="2.5" cy="2" r="1.500" fill="#f44"/><circle cx="11" cy="6" r="1.500" fill="#f44"/><circle cx="14.5" cy="13.5" r="1.500" fill="#f44"/></svg>
<svg style="position:absolute;left:1042px;top:66px" width="16" height="16" viewBox="0 0 16 16"><path d="M1.500 1.500h13v12.500h-13z" fill="#e4e4e4" stroke="#666" stroke-width="1.300"/><path d="M4 4h8v7.500H4z" fill="#fff" stroke="#f33" stroke-width="1"/><path d="M6 6h4v4H6zM6 8h4" fill="none" stroke="#444" stroke-width="1"/></svg>
<svg style="position:absolute;left:1061px;top:66px" width="16" height="16" viewBox="0 0 16 16"><text x="-0.500" y="14.500" font-family="'Liberation Serif',serif" font-size="18.500" fill="#555">A</text></svg>
<svg style="position:absolute;left:1086px;top:66px" width="16" height="16" viewBox="0 0 16 16"><path d="M2.500 3.500h10v10h-10z" fill="none" stroke="#555" stroke-width="1.200"/><circle cx="12.5" cy="3.5" r="1.500" fill="#f44"/><circle cx="2.5" cy="13.5" r="1.500" fill="#f44"/></svg>
<svg style="position:absolute;left:1105px;top:66px" width="16" height="16" viewBox="0 0 16 16"><path d="M1.500 12c0-5 3-10 6-10s3 4 3 7 2 6 5 4.500v-3" fill="none" stroke="#666" stroke-width="1.100"/><text x="4.5" y="12" font-family="'Liberation Sans',sans-serif" font-size="8" fill="#5a5ac8" >B</text><circle cx="7" cy="2" r="1.500" fill="#f44"/><circle cx="1.5" cy="12" r="1.500" fill="#f44"/><circle cx="11" cy="9" r="1.500" fill="#f44"/></svg>
<svg style="position:absolute;left:1129px;top:66px" width="16" height="16" viewBox="0 0 16 16"><path d="M2 1v13.500M11 1v8" stroke="#3a5ae8" stroke-width="1.300"/><path d="M2 4h9M8 7h7" stroke="#3a5ae8" stroke-width="1.100"/><path d="M2.500 9.500h5v2h3.500v3.500H2.500z" fill="#f4f070" stroke="#a8a020" stroke-width=".8"/><path d="M12 9v6M14.500 9v6M11.500 9.500h3.500M11.500 14.500h3.500" stroke="#3a5ae8" stroke-width="1"/></svg>
<svg style="position:absolute;left:1149px;top:66px" width="16" height="16" viewBox="0 0 16 16"><path d="M1.500 4h4v3.500h-4z" fill="none" stroke="#2a9838" stroke-width="1.100"/><path d="M2 1.500l1.500 1.500 1.500-1.500M9 4l4 3.500-2 3-4-3.500zM11 12.500h4v2.500h-4z" fill="none" stroke="#2a9838" stroke-width="1"/><path d="M5.500 7l6 6.500" stroke="#555" stroke-width="1.100"/></svg>
<svg style="position:absolute;left:1169px;top:66px" width="16" height="16" viewBox="0 0 16 16"><path d="M1.500 14.500h13M2.500 14.500L8.500 1.500" stroke="#555" stroke-width="1.200" fill="none"/><path d="M7 6c3 1 4.500 4 4.500 7.500" stroke="#2a9838" stroke-width="1.100" fill="none"/><circle cx="12.500" cy="4" r="1.900" fill="none" stroke="#2a9838" stroke-width="1"/><path d="M11 4h3" stroke="#2a9838" stroke-width=".9"/></svg>
<svg style="position:absolute;left:1188px;top:66px" width="16" height="16" viewBox="0 0 16 16"><path d="M0 12h15.500M2 15.500L10 1" stroke="#555" stroke-width="1.200" fill="none"/><path d="M8 5.500c2.500 1 4 3 4 6" stroke="#2a9838" stroke-width="1.100" fill="none"/><circle cx="13" cy="3.500" r="1.900" fill="none" stroke="#2a9838" stroke-width="1"/><path d="M11.500 3.500h3" stroke="#2a9838" stroke-width=".9"/></svg>
<svg style="position:absolute;left:1207px;top:66px" width="16" height="16" viewBox="0 0 16 16"><path d="M2.500 9.500h12M2.500 9.500v6" stroke="#2a9838" stroke-width="1.100" fill="none"/><path d="M1 12l1.500-1.500L4 12" stroke="#2a9838" fill="none"/><path d="M5 1.500h4M5 4h4M5 6.500h4M11 1.500h3.500M11 4h3.500M11 6.500h3.500" stroke="#2a9838" stroke-width="1.300"/></svg>
<svg style="position:absolute;left:1226px;top:66px" width="16" height="16" viewBox="0 0 16 16"><text x="3" y="8" font-family="'Liberation Sans',sans-serif" font-size="7" fill="#2a9838" font-weight="bold" textLength="11.5" lengthAdjust="spacingAndGlyphs" >???</text><path d="M1.500 9.500h13" stroke="#2a9838" stroke-width="1"/><path d="M1.500 9.500v4M.3 11l1.200-1.500L2.700 11" stroke="#2a9838" stroke-width=".9" fill="none"/><path d="M1 14.500h14" stroke="#333" stroke-width="1.600"/></svg>
<svg style="position:absolute;left:1251px;top:66px" width="16" height="16" viewBox="0 0 16 16"><path d="M2 2h12.500v12.500H2z" fill="#d4d4d4" stroke="#555" stroke-width="1.100"/><path d="M2 8l6-6M2 12.500L12.500 2M4.500 14.500l10-10M9 14.500l5.500-5.500" stroke="#555" stroke-width="1.100"/><circle cx="2" cy="2" r="1.500" fill="#f44"/><circle cx="14.5" cy="2" r="1.500" fill="#f44"/><circle cx="2" cy="14.5" r="1.500" fill="#f44"/><circle cx="14.5" cy="14.5" r="1.500" fill="#f44"/></svg>
<div style="position:absolute;left:972.5px;top:67px;width:1px;height:14px;background:#9a9cbe"></div><div style="position:absolute;left:973.5px;top:67px;width:1px;height:14px;background:#f4f4fa"></div>
<div style="position:absolute;left:1036.0px;top:67px;width:1px;height:14px;background:#9a9cbe"></div><div style="position:absolute;left:1037.0px;top:67px;width:1px;height:14px;background:#f4f4fa"></div>
<div style="position:absolute;left:1079.5px;top:67px;width:1px;height:14px;background:#9a9cbe"></div><div style="position:absolute;left:1080.5px;top:67px;width:1px;height:14px;background:#f4f4fa"></div>
<div style="position:absolute;left:1124.0px;top:67px;width:1px;height:14px;background:#9a9cbe"></div><div style="position:absolute;left:1125.0px;top:67px;width:1px;height:14px;background:#f4f4fa"></div>
<div style="position:absolute;left:1245.0px;top:67px;width:1px;height:14px;background:#9a9cbe"></div><div style="position:absolute;left:1246.0px;top:67px;width:1px;height:14px;background:#f4f4fa"></div>
<div style="position:absolute;left:2px;top:86px;width:584px;height:21.5px;border-radius:4px;background:linear-gradient(#fbfbfd 0%,#f1f2f7 45%,#dfe1ec 55%,#e6e8f1 100%);box-shadow:0 1px 0 #c2c4d4, 1px 0 0 #cfd0de;"></div>
<div style="position:absolute;left:6px;top:90.5px;width:2px;height:2px;background:#4a4a8a"></div>
<div style="position:absolute;left:6px;top:94.0px;width:2px;height:2px;background:#4a4a8a"></div>
<div style="position:absolute;left:6px;top:97.5px;width:2px;height:2px;background:#4a4a8a"></div>
<div style="position:absolute;left:6px;top:101.0px;width:2px;height:2px;background:#4a4a8a"></div>
<div style="position:absolute;left:55px;top:87.5px;width:18.5px;height:18.5px;border-radius:3px;background:linear-gradient(#f8d29c 0%,#fbd49a 40%,#fbc274 58%,#fddc9c 100%);box-shadow:0 0 0 1px #cfa468 inset;"></div>
<div style="position:absolute;left:132px;top:87.5px;width:18.5px;height:18.5px;border-radius:3px;background:linear-gradient(#f8d29c 0%,#fbd49a 40%,#fbc274 58%,#fddc9c 100%);box-shadow:0 0 0 1px #cfa468 inset;"></div>
<div style="position:absolute;left:338.5px;top:87.5px;width:18.5px;height:18.5px;border-radius:3px;background:linear-gradient(#f8d29c 0%,#fbd49a 40%,#fbc274 58%,#fddc9c 100%);box-shadow:0 0 0 1px #cfa468 inset;"></div>
<div id="t33" style="position:absolute;left:12.5px;top:87.5px;font:12px/16px 'Liberation Sans','IPAGothic',sans-serif;color:#333;white-space:nowrap;">色</div>
<svg style="position:absolute;left:27px;top:95px" width="6" height="3.500" viewBox="0 0 6 3.500"><path d="M0 0h6L3 3.500z" fill="#7b7b86"/></svg>
<svg style="position:absolute;left:20px;top:101px" width="7" height="4" viewBox="0 0 7 4"><path d="M0 0h7L3.5 4z" fill="#333"/></svg>
<svg style="position:absolute;left:37px;top:89px" width="16" height="16" viewBox="0 0 16 16"><path d="M2.500 1v14.500M13.500 1v14.500" stroke="#333" stroke-width="1.500"/><path d="M4 8.500l3-3.500v2.300h2V5l3 3.500-3 3.500V9.700H7V12z" fill="#3a4ad0"/></svg>
<svg style="position:absolute;left:56px;top:89px" width="16" height="16" viewBox="0 0 16 16"><path d="M.5 2h15M.5 5h15M.5 11.500h15M.5 14.500h15" stroke="#333" stroke-width="1" stroke-dasharray="1 1.200"/><text x="2" y="12.500" font-family="'Liberation Sans','IPAGothic',sans-serif" font-size="12" font-weight="bold" fill="#222">仮</text></svg>
<svg style="position:absolute;left:76px;top:89px" width="16" height="16" viewBox="0 0 16 16"><path d="M1.500 1.500h8v5.500h-8z" fill="#ffe860" stroke="#f04040" stroke-width="1.200"/><path d="M6.500 10h8v5h-8z" fill="#fff" stroke="#f04040" stroke-width="1.200"/><path d="M11.500 2c2 0 2.500 1.500 2.500 4M4.500 14c-2 0-2.500-1.500-2.500-4" stroke="#3a4ae0" stroke-width="1.100" fill="none"/><path d="M12.500 5h3l-1.500 2.500zM.5 11h3L2 8.500z" fill="#3a4ae0"/></svg>
<svg style="position:absolute;left:95px;top:89px" width="16" height="16" viewBox="0 0 16 16"><path d="M1 2c5 1 3 9 10 12M5 1c5 1 3 9 10 12" stroke="#666" stroke-width="1.100" fill="none"/><path d="M3 1.500c5 1 3 9 10 12" stroke="#aaa" stroke-width="2" fill="none"/><path d="M10 1l4 3v7M2 6l1.500 7 4 2.500" stroke="#f04040" stroke-width="1" fill="none" stroke-dasharray="1.500 1.200"/></svg>
<svg style="position:absolute;left:114px;top:89px" width="16" height="16" viewBox="0 0 16 16"><path d="M1.500 2h13v12.500h-13z" fill="none" stroke="#555" stroke-width="1.100" stroke-dasharray="1 1.300"/><text x="3.5" y="12.5" font-family="'Liberation Sans',sans-serif" font-size="11.5" fill="#444" font-weight="bold" >G</text></svg>
<svg style="position:absolute;left:133.5px;top:89px" width="16" height="16" viewBox="0 0 16 16"><path d="M4 1l3.500 3L5 7.500 1.500 4.500z" fill="#50f0f8" stroke="#222" stroke-width="1"/><path d="M5.500 6.500l8 6.500" stroke="#111" stroke-width="2"/><path d="M2 11.500h9.500l4 4H6z" fill="#f02030" stroke="#111" stroke-width="1"/></svg>
<svg style="position:absolute;left:158px;top:89px" width="16" height="16" viewBox="0 0 16 16"><text x="0.5" y="5" font-family="'Liberation Sans',sans-serif" font-size="5.5" fill="#444" font-weight="bold" >A</text><path d="M3 5.500l3.500 3.500" stroke="#3a3ac0" stroke-width="1.100"/><path d="M7.500 10l-3-.8 2.200-2.200z" fill="#3a3ac0"/><text x="5.500" y="15.500" font-family="'Liberation Serif',serif" font-size="13" fill="#444">A</text></svg>
<svg style="position:absolute;left:183px;top:89px" width="16" height="16" viewBox="0 0 16 16"><path d="M1 2h14v11.500H1z" fill="#e4e4e4" stroke="#666" stroke-width="1.300"/><path d="M3.500 4.500h9v6.500h-9z" fill="#48b8b0" stroke="#445" stroke-width="1"/><path d="M4 5h4l-4 4z" fill="#a0e8e0"/></svg>
<svg style="position:absolute;left:202px;top:89px" width="16" height="16" viewBox="0 0 16 16"><path d="M1 1h14v14.500H1z" fill="#e0e0e4" stroke="#666" stroke-width="1.300"/><text x="2.3" y="7.5" font-family="'Liberation Sans',sans-serif" font-size="6" fill="#3a4ad0" font-weight="bold" textLength="11.5" lengthAdjust="spacingAndGlyphs" >LAY</text><text x="2.3" y="14" font-family="'Liberation Sans',sans-serif" font-size="6" fill="#3a4ad0" font-weight="bold" textLength="11.5" lengthAdjust="spacingAndGlyphs" >OUT</text></svg>
<svg style="position:absolute;left:276px;top:89px" width="16" height="16" viewBox="0 0 16 16"><path d="M1.500 .5h4l2 2v6.500h-6z" fill="#fff" stroke="#555" stroke-width="1"/><path d="M7 1.500c3 0 5 1.500 5 5" stroke="#4cf" stroke-width="1.400" fill="none"/><circle cx="11" cy="4" r="1.200" fill="#f4c"/><circle cx="11.800" cy="6.800" r="1.200" fill="#5d5"/><text x="3.5" y="15.5" font-family="'Liberation Sans',sans-serif" font-size="6.5" fill="#3a4ae0" font-weight="bold" textLength="12" lengthAdjust="spacingAndGlyphs" >SET</text></svg>
<svg style="position:absolute;left:301px;top:89px" width="16" height="16" viewBox="0 0 16 16"><path d="M1.500 1.500h8.500v12.500H1.500z" fill="none" stroke="#555" stroke-width="1.100" stroke-dasharray="1 1.200"/><path d="M6 9c0-3 2-5 4-4s0 5-2 5 3-7 6-6M5.500 11.500l9-8" stroke="#c03030" stroke-width="1" fill="none"/></svg>
<svg style="position:absolute;left:321px;top:89px" width="16" height="16" viewBox="0 0 16 16"><circle cx="8" cy="8" r="7" fill="#40d850" stroke="#226828" stroke-width="1.300"/><path d="M6.500 3v9l2-2 1.500 3.500 1.500-.7L10 9.500h2.500z" fill="#e8e8e8" stroke="#555" stroke-width=".8"/></svg>
<svg style="position:absolute;left:340px;top:89px" width="16" height="16" viewBox="0 0 16 16"><path d="M4.500 .8v12l2.800-2.700 2 4.900 2.300-1-2-4.700h4z" fill="#fff" stroke="#111" stroke-width="1.200" stroke-linejoin="round"/></svg>
<svg style="position:absolute;left:365px;top:89px" width="16" height="16" viewBox="0 0 16 16"><path d="M1 1h14.500v10l-4 4.500H1z" fill="#a0f0f8" stroke="#555" stroke-width="1.200"/><path d="M15.500 11h-4v4.500" fill="#d0fafa" stroke="#555" stroke-width="1"/><path d="M4 3v9.500M2 10h10" stroke="#333" stroke-width="1.300"/></svg>
<svg style="position:absolute;left:384px;top:89px" width="16" height="16" viewBox="0 0 16 16"><path d="M1 1h14.500v10l-4 4.500H1z" fill="#f8f068" stroke="#555" stroke-width="1.200"/><path d="M15.500 11h-4v4.500" fill="#fcfcc0" stroke="#555" stroke-width="1"/><path d="M4 3v9.500M2 10h9M9 5h5M11.500 2.500v5" stroke="#333" stroke-width="1.400"/></svg>
<svg style="position:absolute;left:524px;top:89px" width="16" height="16" viewBox="0 0 16 16"><path d="M1 3h14.500v9.500H1z" fill="#ececf4" stroke="#555" stroke-width="1.300"/><text x="2.3" y="11" font-family="'Liberation Sans',sans-serif" font-size="7" fill="#3a3ac8" font-weight="bold" textLength="12" lengthAdjust="spacingAndGlyphs" >SCP</text></svg>
<svg style="position:absolute;left:544px;top:89px" width="16" height="16" viewBox="0 0 16 16"><path d="M.8 4V2h6l1 1.500h7.500V13H.8z" fill="#f0e050" stroke="#6a6420" stroke-width="1.100"/><path d="M8 1h4v2h-4z" fill="#777"/><text x="2" y="11.5" font-family="'Liberation Sans',sans-serif" font-size="7" fill="#3a3ac8" font-weight="bold" textLength="12" lengthAdjust="spacingAndGlyphs" >SCP</text></svg>
<svg style="position:absolute;left:568px;top:89px" width="16" height="16" viewBox="0 0 16 16"><path d="M2 .8h12v15H2z" fill="#b8e8e8" stroke="#667" stroke-width="1.200"/><path d="M4 3h8v2.500H4z" fill="#fff" stroke="#667" stroke-width=".8"/><path d="M4 8h8M4 10.500h8M4 13h8" stroke="#38a0a0" stroke-width="1.500" stroke-dasharray="1.600 .9"/></svg>
<div style="position:absolute;left:153.0px;top:90px;width:1px;height:14px;background:#9a9cbe"></div><div style="position:absolute;left:154.0px;top:90px;width:1px;height:14px;background:#f4f4fa"></div>
<div style="position:absolute;left:177.5px;top:90px;width:1px;height:14px;background:#9a9cbe"></div><div style="position:absolute;left:178.5px;top:90px;width:1px;height:14px;background:#f4f4fa"></div>
<div style="position:absolute;left:221.5px;top:90px;width:1px;height:14px;background:#9a9cbe"></div><div style="position:absolute;left:222.5px;top:90px;width:1px;height:14px;background:#f4f4fa"></div>
<div style="position:absolute;left:270.5px;top:90px;width:1px;height:14px;background:#9a9cbe"></div><div style="position:absolute;left:271.5px;top:90px;width:1px;height:14px;background:#f4f4fa"></div>
<div style="position:absolute;left:295.0px;top:90px;width:1px;height:14px;background:#9a9cbe"></div><div style="position:absolute;left:296.0px;top:90px;width:1px;height:14px;background:#f4f4fa"></div>
<div style="position:absolute;left:359.0px;top:90px;width:1px;height:14px;background:#9a9cbe"></div><div style="position:absolute;left:360.0px;top:90px;width:1px;height:14px;background:#f4f4fa"></div>
<div style="position:absolute;left:518.5px;top:90px;width:1px;height:14px;background:#9a9cbe"></div><div style="position:absolute;left:519.5px;top:90px;width:1px;height:14px;background:#f4f4fa"></div>
<div style="position:absolute;left:562.5px;top:90px;width:1px;height:14px;background:#9a9cbe"></div><div style="position:absolute;left:563.5px;top:90px;width:1px;height:14px;background:#f4f4fa"></div>
<div style="position:absolute;left:226.5px;top:87.5px;width:42px;height:18px;box-sizing:border-box;border:1px solid #c3c5d6;border-radius:2px;background:#e9eaf0;"></div>
<svg style="position:absolute;left:258.5px;top:95.0px" width="6" height="3.500" viewBox="0 0 6 3.500"><path d="M0 0h6L3 3.500z" fill="#7b7b86"/></svg>
<div style="position:absolute;left:230px;top:90px;width:21.5px;height:13.5px;background:#000"></div>
<div style="position:absolute;left:401px;top:87.5px;width:115px;height:18px;box-sizing:border-box;border:1px solid #c3c5d6;border-radius:2px;background:#e9eaf0;"></div>
<svg style="position:absolute;left:506px;top:95.0px" width="6" height="3.500" viewBox="0 0 6 3.500"><path d="M0 0h6L3 3.500z" fill="#7b7b86"/></svg>
<div id="t34" style="position:absolute;left:407.5px;top:89.0px;font:12px/16px 'Liberation Sans','IPAGothic',sans-serif;color:#111;white-space:nowrap;letter-spacing:-0.672px;">iplane</div>
<div style="position:absolute;left:589px;top:86px;width:673.5px;height:21.5px;border-radius:4px;background:linear-gradient(#fbfbfd 0%,#f1f2f7 45%,#dfe1ec 55%,#e6e8f1 100%);box-shadow:0 1px 0 #c2c4d4, 1px 0 0 #cfd0de;"></div>
<div style="position:absolute;left:593px;top:90.5px;width:2px;height:2px;background:#4a4a8a"></div>
<div style="position:absolute;left:593px;top:94.0px;width:2px;height:2px;background:#4a4a8a"></div>
<div style="position:absolute;left:593px;top:97.5px;width:2px;height:2px;background:#4a4a8a"></div>
<div style="position:absolute;left:593px;top:101.0px;width:2px;height:2px;background:#4a4a8a"></div>
<div style="position:absolute;left:622.5px;top:87.5px;width:18.8px;height:18.5px;border-radius:3px;background:linear-gradient(#f8d29c 0%,#fbd49a 40%,#fbc274 58%,#fddc9c 100%);box-shadow:0 0 0 1px #cfa468 inset;"></div>
<div style="position:absolute;left:680px;top:87.5px;width:18.8px;height:18.5px;border-radius:3px;background:linear-gradient(#f8d29c 0%,#fbd49a 40%,#fbc274 58%,#fddc9c 100%);box-shadow:0 0 0 1px #cfa468 inset;"></div>
<div style="position:absolute;left:699.5px;top:87.5px;width:18.8px;height:18.5px;border-radius:3px;background:linear-gradient(#f8d29c 0%,#fbd49a 40%,#fbc274 58%,#fddc9c 100%);box-shadow:0 0 0 1px #cfa468 inset;"></div>
<div style="position:absolute;left:718.5px;top:87.5px;width:18.8px;height:18.5px;border-radius:3px;background:linear-gradient(#f8d29c 0%,#fbd49a 40%,#fbc274 58%,#fddc9c 100%);box-shadow:0 0 0 1px #cfa468 inset;"></div>
<div style="position:absolute;left:762px;top:87.5px;width:18.8px;height:18.5px;border-radius:3px;background:linear-gradient(#f8d29c 0%,#fbd49a 40%,#fbc274 58%,#fddc9c 100%);box-shadow:0 0 0 1px #cfa468 inset;"></div>
<div style="position:absolute;left:977px;top:87.5px;width:18.8px;height:18.5px;border-radius:3px;background:linear-gradient(#f8d29c 0%,#fbd49a 40%,#fbc274 58%,#fddc9c 100%);box-shadow:0 0 0 1px #cfa468 inset;"></div>
<div style="position:absolute;left:1192px;top:87.5px;width:19.5px;height:18.5px;border-radius:3px;background:linear-gradient(#f8d29c 0%,#fbd49a 40%,#fbc274 58%,#fddc9c 100%);box-shadow:0 0 0 1px #cfa468 inset;"></div>
<div style="position:absolute;left:1242px;top:87.5px;width:18.8px;height:18.5px;border-radius:3px;background:linear-gradient(#f8d29c 0%,#fbd49a 40%,#fbc274 58%,#fddc9c 100%);box-shadow:0 0 0 1px #cfa468 inset;"></div>
<svg style="position:absolute;left:599px;top:89px" width="16" height="16" viewBox="0 0 16 16"><path d="M1 10c3-5 8-8 14-8-1 4-1 8-1 11-5-2-9-2-13-3z" fill="none" stroke="#777" stroke-width="1"/><path d="M3 4c5 2 8 6 10 10M12 2c-2 4-5 8-9 11" stroke="#e83040" stroke-width="1.300" fill="none"/></svg>
<svg style="position:absolute;left:624px;top:89px" width="16" height="16" viewBox="0 0 16 16"><path d="M2 10l1-6 5-3 5 2 2.500 5-2 5-6 2-4-2z" fill="#30e0f0" stroke="#111" stroke-width="1.300" stroke-linejoin="round"/><path d="M3 4l4 3 1-6M7 7l8.500 1M7 7l-1 8M7 7l-5 3M13 3l-6 4" stroke="#111" stroke-width=".9" fill="none"/><path d="M4 4.500l2.500 2 .7-3.500z" fill="#d0ffff"/></svg>
<svg style="position:absolute;left:643px;top:89px" width="16" height="16" viewBox="0 0 16 16"><path d="M1 6.500L4 1l3 5.500z" fill="#fff" stroke="#555" stroke-width="1"/><path d="M9 14.500l3-5.500 3 5.500z" fill="#f8f040" stroke="#555" stroke-width="1"/><path d="M5 5l5 5" stroke="#e83030" stroke-width="1.600"/><path d="M11.500 11.500l-4-1 3-3z" fill="#e83030"/></svg>
<svg style="position:absolute;left:663px;top:89px" width="16" height="16" viewBox="0 0 16 16"><text x="0" y="15.500" font-family="'Liberation Sans','IPAGothic',sans-serif" font-size="11" fill="#444">透</text><circle cx="11.500" cy="4" r="3.300" fill="#b8e8f0" stroke="#888" stroke-width=".8"/><path d="M8.500 2l2 3M14.500 2.500l-2 3" stroke="#e44" stroke-width=".9"/><path d="M11.500 1v6" stroke="#3a8" stroke-width=".8"/></svg>
<svg style="position:absolute;left:681px;top:89px" width="16" height="16" viewBox="0 0 16 16"><path d="M8 1.500L15 14.500H1z" fill="#ffd0d0" stroke="#f02828" stroke-width="1.500" stroke-linejoin="round"/><path d="M8 4.500l4.500 8.500h-9z" fill="#ffe8e8"/></svg>
<svg style="position:absolute;left:701px;top:89px" width="16" height="16" viewBox="0 0 16 16"><path d="M8 2l3-1.500 2 1L10 3z" fill="#222"/><path d="M8 2v7.500l2 .8V3z" fill="#555"/><path d="M10 3l3-1.500v7.500l-3 1.300z" fill="#30d040" stroke="#111" stroke-width=".7"/><path d="M2 12l6-2.500 2 .8 3-1.300 2 1v2.500l-8 3-5-1.500z" fill="#ddd" stroke="#111" stroke-width="1.100" stroke-linejoin="round"/><path d="M2 12l5 1.500 8-3M7 13.500v2" stroke="#111" stroke-width=".9" fill="none"/></svg>
<svg style="position:absolute;left:720px;top:89px" width="16" height="16" viewBox="0 0 16 16"><path d="M7 1h8v10H7z" fill="#f01828"/><path d="M3.500 6.500L6 4.500h5v5.500L8.500 12h-5z" fill="#20c040" stroke="#163" stroke-width=".5"/><path d="M1 9.500h8.500v6H1z" fill="#1030e8"/><path d="M1 9.500l2-1.500h8l-1.500 1.500z" fill="#5080ff"/></svg>
<svg style="position:absolute;left:739px;top:89px" width="16" height="16" viewBox="0 0 16 16"><path d="M1 11l6-3 5.500-7-1 8.500 3 6-6-3.500z" fill="#f8f060" stroke="#888" stroke-width=".9" stroke-linejoin="round"/><path d="M1.500 2l11 9.500" stroke="#e84040" stroke-width="1.100"/><path d="M9 9l6.500-1" stroke="#e84040" stroke-width="1.100"/><path d="M7 8l2 1" stroke="#3a3ae0" stroke-width="1.200"/></svg>
<svg style="position:absolute;left:763.5px;top:89px" width="16" height="16" viewBox="0 0 16 16"><path d="M1.500 1.500h9v3h-9z" fill="none" stroke="#333" stroke-width="1" stroke-dasharray="1.500 1"/><path d="M11.500 2l3.500 2.500M13 1l2.500 3.500-3.500-.5" stroke="#e82020" stroke-width="1.100" fill="none"/><path d="M6 6h9v3H6z" fill="#fff" stroke="#111" stroke-width="1.200"/><path d="M2 5.500v3.500M1 8h3.500" stroke="#e82020" stroke-width="1.200"/><text x="1" y="15.8" font-family="'Liberation Sans',sans-serif" font-size="6.5" fill="#1828d8" font-weight="bold" textLength="14.5" lengthAdjust="spacingAndGlyphs" >SECT</text></svg>
<svg style="position:absolute;left:789px;top:89px" width="16" height="16" viewBox="0 0 16 16"><path d="M1.500 1.500h13v13h-13zM8 1.500v13M1.500 8h13" fill="none" stroke="#3a50e8" stroke-width="1.200"/><path d="M4 4l2 2M10.500 4.500h2v1.500h-2zM4 11.500h2.500M10 12.500l2.500-2" stroke="#30b050" stroke-width="1.100" fill="none"/></svg>
<svg style="position:absolute;left:808px;top:89px" width="16" height="16" viewBox="0 0 16 16"><path d="M1 1l4.500 5M3.500 .5l4 4.500" stroke="#e8e860" stroke-width="1.200"/><circle cx="8" cy="8" r="3.300" fill="#5868f0" stroke="#334" stroke-width=".8"/><circle cx="7" cy="7" r="1.100" fill="#c0c8ff"/><text x="5" y="16" font-family="'Liberation Sans',sans-serif" font-size="6.5" fill="#3a4ad0" font-weight="bold" textLength="11" lengthAdjust="spacingAndGlyphs" >SET</text></svg>
<svg style="position:absolute;left:833px;top:89px" width="16" height="16" viewBox="0 0 16 16"><path d="M1 1h14.500v10.500l-4 4H1z" fill="#c870d8" stroke="#555" stroke-width="1.200"/><path d="M15.500 11.500h-4v4" fill="#e8b8f0" stroke="#555" stroke-width="1"/><path d="M4 3v10M2 10.500h9" stroke="#222" stroke-width="1.300"/><text x="6" y="8" font-family="'Liberation Sans',sans-serif" font-size="7" fill="#fff" font-weight="bold" textLength="8.5" lengthAdjust="spacingAndGlyphs" >3D</text></svg>
<svg style="position:absolute;left:978.5px;top:89px" width="16" height="16" viewBox="0 0 16 16"><path d="M2.500 1v13h12.500" stroke="#222" stroke-width="1.5" fill="none"/><path d="M1 3.500h3" stroke="#222" stroke-width=".9"/><text x="5.5" y="6.5" font-family="'Liberation Sans',sans-serif" font-size="7" fill="#222" >Y</text><text x="10" y="12.5" font-family="'Liberation Sans',sans-serif" font-size="8" fill="#222" >X</text></svg>
<svg style="position:absolute;left:999px;top:89px" width="16" height="16" viewBox="0 0 16 16"><path d="M2.500 1v13h12.500" stroke="#707070" stroke-width="1.2" fill="none"/><path d="M1 3.500h3" stroke="#707070" stroke-width=".9"/><text x="5.5" y="6.5" font-family="'Liberation Sans',sans-serif" font-size="7" fill="#707070" >Z</text><text x="10" y="12.5" font-family="'Liberation Sans',sans-serif" font-size="8" fill="#707070" >X</text></svg>
<svg style="position:absolute;left:1018px;top:89px" width="16" height="16" viewBox="0 0 16 16"><path d="M2.500 1v13h12.500" stroke="#707070" stroke-width="1.2" fill="none"/><path d="M1 3.500h3" stroke="#707070" stroke-width=".9"/><text x="5.5" y="6.5" font-family="'Liberation Sans',sans-serif" font-size="7" fill="#707070" >Z</text><text x="10" y="12.5" font-family="'Liberation Sans',sans-serif" font-size="8" fill="#707070" >Y</text></svg>
<svg style="position:absolute;left:1042px;top:89px" width="16" height="16" viewBox="0 0 16 16"><path d="M8 7.500V2M8 7.500L2 12.500M8 7.500l6.500 4.500" stroke="#666" stroke-width="1.200" fill="none"/><path d="M1 13.500l3-.5-1.500-2zM15.500 13l-3-.5 1.500-2.500z" fill="#555"/><text x="0" y="6" font-family="'Liberation Sans',sans-serif" font-size="6" fill="#666" >X</text><text x="10" y="5" font-family="'Liberation Sans',sans-serif" font-size="6" fill="#666" >Z</text><text x="10.5" y="10" font-family="'Liberation Sans',sans-serif" font-size="6" fill="#666" >Y</text></svg>
<svg style="position:absolute;left:1062px;top:89px" width="16" height="16" viewBox="0 0 16 16"><path d="M8 7.500V2M8 7.500L2 12.500M8 7.500l6.500 4.500" stroke="#666" stroke-width="1.200" fill="none"/><path d="M1 13.500l3-.5-1.500-2zM15.500 13l-3-.5 1.500-2.500z" fill="#555"/><text x="5.5" y="5" font-family="'Liberation Sans',sans-serif" font-size="6" fill="#666" >Z</text><text x="0" y="10" font-family="'Liberation Sans',sans-serif" font-size="6" fill="#666" >Y</text><text x="11.5" y="9" font-family="'Liberation Sans',sans-serif" font-size="6" fill="#666" >X</text><path d="M6.500 3.500L8 1l1.500 2.500z" fill="#555"/></svg>
<svg style="position:absolute;left:1081px;top:89px" width="16" height="16" viewBox="0 0 16 16"><path d="M8 7.500V2M8 7.500L2 12.500M8 7.500l6.500 4.500" stroke="#666" stroke-width="1.200" fill="none"/><path d="M1 13.500l3-.5-1.500-2zM15.500 13l-3-.5 1.500-2.500z" fill="#555"/><text x="0.5" y="6.5" font-family="'Liberation Sans',sans-serif" font-size="6" fill="#666" >X</text><text x="9.5" y="5" font-family="'Liberation Sans',sans-serif" font-size="6" fill="#666" >Z</text><text x="1" y="15.5" font-family="'Liberation Sans',sans-serif" font-size="6" fill="#666" >Y</text></svg>
<svg style="position:absolute;left:1101px;top:89px" width="16" height="16" viewBox="0 0 16 16"><path d="M8 7.500V2M8 7.500L2 12.500M8 7.500l6.500 4.500" stroke="#666" stroke-width="1.200" fill="none"/><path d="M1 13.500l3-.5-1.500-2zM15.500 13l-3-.5 1.500-2.500z" fill="#555"/><text x="1" y="5.5" font-family="'Liberation Sans',sans-serif" font-size="6" fill="#666" >Z</text><text x="10.5" y="6.5" font-family="'Liberation Sans',sans-serif" font-size="6" fill="#666" >Y</text><text x="10" y="15.5" font-family="'Liberation Sans',sans-serif" font-size="6" fill="#666" >X</text></svg>
<svg style="position:absolute;left:1125px;top:89px" width="16" height="16" viewBox="0 0 16 16"><path d="M2 2v13h13" stroke="#333" stroke-width="1.300" fill="none"/><path d="M.8 4L2 1.500 3.200 4zM13 13.800l2.500 1.200-2.500 1.200z" fill="#333"/><path d="M3.500 7.500L5.500 5.500h6v6l-2 2h-6z" fill="#38d048" stroke="#163" stroke-width=".7"/><path d="M3.500 7.500h6v6M9.500 7.500l2-2" stroke="#163" stroke-width=".7" fill="none"/><circle cx="6.500" cy="10.500" r="1" fill="#fff"/><text x="9.5" y="5" font-family="'Liberation Sans',sans-serif" font-size="5.5" fill="#4a5ad8" font-weight="bold" textLength="6.5" lengthAdjust="spacingAndGlyphs" >3D</text></svg>
<svg style="position:absolute;left:1150px;top:89px" width="16" height="16" viewBox="0 0 16 16"><path d="M8 8V1M8 8l-6 6M8 8l6.500 5.500" stroke="#444" stroke-width="1.200" fill="none"/><path d="M6.500 3L8 .5 9.500 3zM1 15l1-3 2 2zM15.500 14.500l-3-.5 1.500-2z" fill="#333"/><path d="M4.500 6.500c1.500-2 5.500-2 7 0M3 10c0 2 2 3 3.500 3M13 10c0 2-1.500 3-3 3" stroke="#e82828" stroke-width="1" fill="none" stroke-dasharray="1.800 1"/><text x="10.5" y="4" font-family="'Liberation Sans',sans-serif" font-size="5" fill="#444" font-weight="bold" >Z</text><text x="0" y="9.5" font-family="'Liberation Sans',sans-serif" font-size="5" fill="#444" font-weight="bold" >Y</text><text x="12.5" y="9" font-family="'Liberation Sans',sans-serif" font-size="5" fill="#444" font-weight="bold" >X</text></svg>
<svg style="position:absolute;left:1169px;top:89px" width="16" height="16" viewBox="0 0 16 16"><circle cx="8" cy="8" r="7" fill="#5a66f0" stroke="#445" stroke-width="1"/><circle cx="6.500" cy="6" r="4.500" fill="#98a4ff" opacity=".8"/><circle cx="5.500" cy="5" r="2.300" fill="#e4e8ff" opacity=".9"/></svg>
<svg style="position:absolute;left:1194px;top:89px" width="16" height="16" viewBox="0 0 16 16"><path d="M1 2c3-1.500 5 1.500 8 0M1 5c3-1.500 5 2 9 .5M1 8c3-2 6 2 14 1" stroke="#1020e8" stroke-width="1.300" fill="none"/><path d="M1 11c3-2 6 1 14 2M1 14c3-2 6 1 12 2" stroke="#f01818" stroke-width="1.300" fill="none"/><text x="10" y="7.5" font-family="'Liberation Sans',sans-serif" font-size="9" fill="#111" font-weight="bold" >Z</text></svg>
<svg style="position:absolute;left:1219px;top:89px" width="16" height="16" viewBox="0 0 16 16"><text x="0" y="5.5" font-family="'Liberation Sans',sans-serif" font-size="6.5" fill="#f040f0" font-weight="bold" textLength="15" lengthAdjust="spacingAndGlyphs" >View</text><path d="M2 15c5 0 5-3 6.500-6s2-4.500 7-4.500" stroke="#444" stroke-width="1.200" fill="none"/></svg>
<svg style="position:absolute;left:1244px;top:89px" width="16" height="16" viewBox="0 0 16 16"><path d="M3.500 9l7-7.500 2 .5 2.500 1.500v4l-3.500 1-1-1.500-1.500 1.500-1-1.500L5 11z" fill="#f8f000" stroke="#111" stroke-width="1" stroke-linejoin="round"/><path d="M8.500 7c1 0 1.500-1 1.500-2" stroke="#111" stroke-width=".9" fill="none"/><text x="0.5" y="15.5" font-family="'Liberation Sans',sans-serif" font-size="8" fill="#f020f0" font-weight="bold" >Z</text></svg>
<div style="position:absolute;left:618.0px;top:90px;width:1px;height:14px;background:#9a9cbe"></div><div style="position:absolute;left:619.0px;top:90px;width:1px;height:14px;background:#f4f4fa"></div>
<div style="position:absolute;left:758.0px;top:90px;width:1px;height:14px;background:#9a9cbe"></div><div style="position:absolute;left:759.0px;top:90px;width:1px;height:14px;background:#f4f4fa"></div>
<div style="position:absolute;left:783.0px;top:90px;width:1px;height:14px;background:#9a9cbe"></div><div style="position:absolute;left:784.0px;top:90px;width:1px;height:14px;background:#f4f4fa"></div>
<div style="position:absolute;left:827.0px;top:90px;width:1px;height:14px;background:#9a9cbe"></div><div style="position:absolute;left:828.0px;top:90px;width:1px;height:14px;background:#f4f4fa"></div>
<div style="position:absolute;left:852.0px;top:90px;width:1px;height:14px;background:#9a9cbe"></div><div style="position:absolute;left:853.0px;top:90px;width:1px;height:14px;background:#f4f4fa"></div>
<div style="position:absolute;left:973.0px;top:90px;width:1px;height:14px;background:#9a9cbe"></div><div style="position:absolute;left:974.0px;top:90px;width:1px;height:14px;background:#f4f4fa"></div>
<div style="position:absolute;left:1036.5px;top:90px;width:1px;height:14px;background:#9a9cbe"></div><div style="position:absolute;left:1037.5px;top:90px;width:1px;height:14px;background:#f4f4fa"></div>
<div style="position:absolute;left:1119.0px;top:90px;width:1px;height:14px;background:#9a9cbe"></div><div style="position:absolute;left:1120.0px;top:90px;width:1px;height:14px;background:#f4f4fa"></div>
<div style="position:absolute;left:1144.0px;top:90px;width:1px;height:14px;background:#9a9cbe"></div><div style="position:absolute;left:1145.0px;top:90px;width:1px;height:14px;background:#f4f4fa"></div>
<div style="position:absolute;left:1188.0px;top:90px;width:1px;height:14px;background:#9a9cbe"></div><div style="position:absolute;left:1189.0px;top:90px;width:1px;height:14px;background:#f4f4fa"></div>
<div style="position:absolute;left:1213.0px;top:90px;width:1px;height:14px;background:#9a9cbe"></div><div style="position:absolute;left:1214.0px;top:90px;width:1px;height:14px;background:#f4f4fa"></div>
<div style="position:absolute;left:1238.0px;top:90px;width:1px;height:14px;background:#9a9cbe"></div><div style="position:absolute;left:1239.0px;top:90px;width:1px;height:14px;background:#f4f4fa"></div>
<div style="position:absolute;left:856.5px;top:87.5px;width:114.5px;height:18px;box-sizing:border-box;border:1px solid #c3c5d6;border-radius:2px;background:#e9eaf0;"></div>
<svg style="position:absolute;left:961.0px;top:95.0px" width="6" height="3.500" viewBox="0 0 6 3.500"><path d="M0 0h6L3 3.500z" fill="#7b7b86"/></svg>
<div style="position:absolute;left:858px;top:89px;width:97px;height:15.5px;background:#ccccff"></div>
<div id="t35" style="position:absolute;left:859.5px;top:89.0px;font:12px/16px 'Liberation Sans','IPAGothic',sans-serif;color:#f01020;white-space:nowrap;letter-spacing:-1.422px;">3D</div>
<div id="t36" style="position:absolute;left:877.5px;top:89.2px;font:12px/16px 'Liberation Sans','IPAGothic',sans-serif;color:#111;white-space:nowrap;letter-spacing:-0.400px;">基準座標系</div>
<div style="position:absolute;left:1px;top:109.5px;width:1535px;height:21px;background:linear-gradient(#ffffff 0%,#ffffff 72%,#f1f1f1 100%)"></div>
<div id="t37" style="position:absolute;left:560px;top:113.0px;font:12px/16px 'Liberation Sans','IPAGothic',sans-serif;color:#333;white-space:nowrap;">移動<span style="display:inline-block;transform:scaleX(0.6500);transform-origin:0 50%;margin-right:-8.400px">する</span>位置<span style="display:inline-block;transform:scaleX(0.6500);transform-origin:0 50%;margin-right:-4.200px">を</span>指示<span style="display:inline-block;transform:scaleX(0.6500);transform-origin:0 50%;margin-right:-29.400px">してください。</span></div>
<div style="position:absolute;left:0px;top:130.5px;width:1536px;height:673.5px;background:#a2a2a2"></div>
<div style="position:absolute;left:0px;top:130.5px;width:1536px;height:1.5px;background:linear-gradient(#e4e4e4,#a8a8a8)"></div>
<div style="position:absolute;left:2.5px;top:133.3px;width:169px;height:670.2px;background:#f0f0f0"></div>
<div style="position:absolute;left:3px;top:135px;width:167px;height:19.5px;background:#b1b6c8"></div>
<div id="t38" style="position:absolute;left:5px;top:136.8px;font:13px/17px 'Liberation Sans','Noto Sans CJK JP',sans-serif;color:#474c63;white-space:nowrap;"><span style="display:inline-block;transform:scaleX(0.6635);transform-origin:0 50%;margin-right:-13.125px">レイヤ</span></div>
<svg style="position:absolute;left:141px;top:138px" width="28" height="13" viewBox="0 0 28 13"><path d="M3.500 1.500h4M4.500 1.500v5.500M7 1.500v5.500M2 7.500h7M5.500 8v4" stroke="#3c4054" stroke-width="1.200" fill="none"/><path d="M18 2.500l7 7M25 2.500l-7 7" stroke="#3c4054" stroke-width="1.300" fill="none"/></svg>
<svg style="position:absolute;left:5px;top:158.5px" width="16" height="16" viewBox="0 0 16 16"><path d="M1 14.500l1.500-4L12 1.500l2.500 2L5 13z" fill="#9c9c9c"/></svg>
<svg style="position:absolute;left:27.5px;top:158.5px" width="16" height="16" viewBox="0 0 16 16"><path d="M7.500 1l2 4.500 4.700.5-3.500 3.200 1 4.800-4.200-2.500L3.300 14l1-4.800L.8 6l4.700-.5z" fill="#f8c050" stroke="#e09020" stroke-width="1"/><path d="M7.500 3.500l1.200 3 3 .3-2.200 2 .6 3-2.600-1.600z" fill="#fde0a0"/></svg>
<svg style="position:absolute;left:49px;top:158.5px" width="16" height="16" viewBox="0 0 16 16"><path d="M1 2.5h5v3h-5" fill="none" stroke="#5a6a98" stroke-width="1"/><path d="M1 11h5v3h-5" fill="none" stroke="#5a6a98" stroke-width="1"/><path d="M6.5 8.5h3" stroke="#333" stroke-width="1"/><path d="M6.5 8.5l2-1.500v3z" fill="#333"/><rect x="10.0" y="6.5" width="5" height="4" fill="#5890e0" stroke="#3a5a98" stroke-width=".6"/></svg>
<svg style="position:absolute;left:71px;top:158.5px" width="16" height="16" viewBox="0 0 16 16"><path d="M1 1.5h5v3h-5" fill="none" stroke="#5a6a98" stroke-width="1"/><path d="M1 6h5v3h-5" fill="none" stroke="#5a6a98" stroke-width="1"/><path d="M6.5 12.5h3" stroke="#333" stroke-width="1"/><path d="M6.5 12.5l2-1.500v3z" fill="#333"/><rect x="10.0" y="10.5" width="5" height="4" fill="#5890e0" stroke="#3a5a98" stroke-width=".6"/></svg>
<svg style="position:absolute;left:94px;top:158.5px" width="16" height="16" viewBox="0 0 16 16"><path d="M.5 5.500h9L13 2h2.500l-1 4.500v8H.5z" fill="#a3a3a3"/></svg>
<svg style="position:absolute;left:116px;top:158.5px" width="16" height="16" viewBox="0 0 16 16"><path d="M2 3l11 10.500M13 3L2 13.500" stroke="#a0a0a0" stroke-width="2.400"/></svg>
<svg style="position:absolute;left:138px;top:158.5px" width="16" height="16" viewBox="0 0 16 16"><path d="M7.500 1l6.500 7h-3.500v6h-6V8H1z" fill="#a0a0a0"/></svg>
<svg style="position:absolute;left:160px;top:158.5px" width="10" height="16" viewBox="0 0 10 16"><path d="M3 1h7v8H3z M0 9h10v1L8 14H6z" fill="#a3a3a3"/></svg>
<div style="position:absolute;left:3px;top:180px;width:167px;height:623px;background:#fff"></div>
<svg style="position:absolute;left:3px;top:181.0px" width="16" height="16" viewBox="0 0 16 16"><circle cx="5.700" cy="5.700" r="4.700" fill="#18e4f4" stroke="#000" stroke-width="1.300"/><path d="M3.300 6.200l4-2.700" stroke="#fff" stroke-width="1.600" stroke-linecap="round"/><path d="M9 9l5.800 5.500" stroke="#000" stroke-width="2.100" stroke-linecap="round"/></svg>
<svg style="position:absolute;left:18.5px;top:180.5px" width="16" height="16" viewBox="0 0 16 16"><path d="M1 3l1.800 1M7.500 0v1.500M14 3l-1.800 1M.5 7.500h1.500M14.500 7.500h-1.500M2 11.500l1.300-1M13 11.500l-1.300-1M3.500 .8l1 1.500M11.500 .8l-1 1.500" stroke="#b8b830" stroke-width=".9"/><path d="M7.500 1.800a4.600 4.600 0 0 1 2.300 8.600v1.800h-4.600v-1.800a4.600 4.600 0 0 1 2.300-8.600z" fill="#ffff10" stroke="#555" stroke-width=".9"/><path d="M5.500 12.500h4v2.500h-4z" fill="#999" stroke="#444" stroke-width=".8"/><path d="M5.500 13.800h4" stroke="#333" stroke-width=".7"/></svg>
<svg style="position:absolute;left:35.5px;top:181.0px" width="16" height="16" viewBox="0 0 16 16"><path d="M3.500 15c-1-1-2.500-2.500-2.800-4.500-.2-1.200 1-1.800 1.800-.8l1 1.300V2c0-1.400 2-1.400 2 0v5h.8c.8 0 1.200.3 1.300.9.900-.1 1.400.3 1.500 1 .9 0 1.400.5 1.400 1.400V12c0 1.500-.8 2.500-1.800 3z" fill="#fff" stroke="#222" stroke-width="1.100" stroke-linejoin="round"/></svg>
<div style="position:absolute;left:50.3px;top:181.3px;width:10.2px;height:14px;box-sizing:border-box;border:1px solid #333;background:#fff"></div>
<div id="t39" style="position:absolute;left:64.5px;top:181.95px;font:12.5px/16.5px 'Liberation Sans','Noto Sans CJK JP',sans-serif;color:#0000ff;white-space:nowrap;letter-spacing:-0.339px;font-weight:bold;">等高線</div>
<svg style="position:absolute;left:3px;top:196.6px" width="16" height="16" viewBox="0 0 16 16"><circle cx="5.700" cy="5.700" r="4.700" fill="#18e4f4" stroke="#000" stroke-width="1.300"/><path d="M3.300 6.200l4-2.700" stroke="#fff" stroke-width="1.600" stroke-linecap="round"/><path d="M9 9l5.800 5.500" stroke="#000" stroke-width="2.100" stroke-linecap="round"/></svg>
<svg style="position:absolute;left:18.5px;top:196.1px" width="16" height="16" viewBox="0 0 16 16"><path d="M1 3l1.800 1M7.500 0v1.500M14 3l-1.800 1M.5 7.500h1.500M14.500 7.500h-1.500M2 11.500l1.300-1M13 11.500l-1.300-1M3.500 .8l1 1.500M11.500 .8l-1 1.500" stroke="#b8b830" stroke-width=".9"/><path d="M7.500 1.800a4.600 4.600 0 0 1 2.300 8.600v1.800h-4.600v-1.800a4.600 4.600 0 0 1 2.300-8.600z" fill="#ffff10" stroke="#555" stroke-width=".9"/><path d="M5.500 12.500h4v2.500h-4z" fill="#999" stroke="#444" stroke-width=".8"/><path d="M5.500 13.800h4" stroke="#333" stroke-width=".7"/></svg>
<svg style="position:absolute;left:35.5px;top:196.6px" width="16" height="16" viewBox="0 0 16 16"><path d="M3.500 15c-1-1-2.500-2.500-2.800-4.500-.2-1.200 1-1.800 1.800-.8l1 1.300V2c0-1.400 2-1.400 2 0v5h.8c.8 0 1.200.3 1.300.9.900-.1 1.400.3 1.500 1 .9 0 1.400.5 1.400 1.400V12c0 1.500-.8 2.500-1.800 3z" fill="#fff" stroke="#222" stroke-width="1.100" stroke-linejoin="round"/></svg>
<div style="position:absolute;left:50.3px;top:196.9px;width:10.2px;height:14px;box-sizing:border-box;border:1px solid #333;background:#fff"></div>
<svg style="position:absolute;left:8.5px;top:195.6px" width="10" height="10" viewBox="0 0 10 10"><path d="M1 1l8 7.500M9 1l-8 7.500" stroke="#f01818" stroke-width="1.700" fill="none"/></svg>
<svg style="position:absolute;left:23.5px;top:195.6px" width="10" height="10" viewBox="0 0 10 10"><path d="M1 1l8 7.500M9 1l-8 7.500" stroke="#f01818" stroke-width="1.700" fill="none"/></svg>
<svg style="position:absolute;left:41px;top:195.6px" width="10" height="10" viewBox="0 0 10 10"><path d="M1 1l8 7.500M9 1l-8 7.500" stroke="#f01818" stroke-width="1.700" fill="none"/></svg>
<div id="t40" style="position:absolute;left:64.5px;top:197.54999999999998px;font:12.5px/16.5px 'Liberation Sans','Noto Sans CJK JP',sans-serif;color:#303030;white-space:nowrap;letter-spacing:-0.434px;">V-nasSTD</div>
<svg style="position:absolute;left:3px;top:212.2px" width="16" height="16" viewBox="0 0 16 16"><circle cx="5.700" cy="5.700" r="4.700" fill="#18e4f4" stroke="#000" stroke-width="1.300"/><path d="M3.300 6.200l4-2.700" stroke="#fff" stroke-width="1.600" stroke-linecap="round"/><path d="M9 9l5.800 5.500" stroke="#000" stroke-width="2.100" stroke-linecap="round"/></svg>
<svg style="position:absolute;left:18.5px;top:211.7px" width="16" height="16" viewBox="0 0 16 16"><path d="M1 3l1.800 1M7.500 0v1.500M14 3l-1.800 1M.5 7.500h1.500M14.500 7.500h-1.500M2 11.500l1.300-1M13 11.500l-1.300-1M3.500 .8l1 1.500M11.500 .8l-1 1.500" stroke="#b8b830" stroke-width=".9"/><path d="M7.500 1.800a4.600 4.600 0 0 1 2.300 8.600v1.800h-4.600v-1.800a4.600 4.600 0 0 1 2.300-8.600z" fill="#ffff10" stroke="#555" stroke-width=".9"/><path d="M5.500 12.500h4v2.500h-4z" fill="#999" stroke="#444" stroke-width=".8"/><path d="M5.500 13.800h4" stroke="#333" stroke-width=".7"/></svg>
<svg style="position:absolute;left:35.5px;top:212.2px" width="16" height="16" viewBox="0 0 16 16"><path d="M3.500 15c-1-1-2.500-2.500-2.800-4.500-.2-1.200 1-1.800 1.800-.8l1 1.300V2c0-1.400 2-1.400 2 0v5h.8c.8 0 1.200.3 1.300.9.900-.1 1.400.3 1.500 1 .9 0 1.400.5 1.400 1.400V12c0 1.500-.8 2.500-1.800 3z" fill="#fff" stroke="#222" stroke-width="1.100" stroke-linejoin="round"/></svg>
<div style="position:absolute;left:50.3px;top:212.5px;width:10.2px;height:14px;box-sizing:border-box;border:1px solid #333;background:#00e000"></div>
<svg style="position:absolute;left:8.5px;top:211.2px" width="10" height="10" viewBox="0 0 10 10"><path d="M1 1l8 7.500M9 1l-8 7.500" stroke="#f01818" stroke-width="1.700" fill="none"/></svg>
<svg style="position:absolute;left:23.5px;top:211.2px" width="10" height="10" viewBox="0 0 10 10"><path d="M1 1l8 7.500M9 1l-8 7.500" stroke="#f01818" stroke-width="1.700" fill="none"/></svg>
<svg style="position:absolute;left:41px;top:211.2px" width="10" height="10" viewBox="0 0 10 10"><path d="M1 1l8 7.500M9 1l-8 7.500" stroke="#f01818" stroke-width="1.700" fill="none"/></svg>
<div id="t41" style="position:absolute;left:64.5px;top:213.14999999999998px;font:12.5px/16.5px 'Liberation Sans','Noto Sans CJK JP',sans-serif;color:#303030;white-space:nowrap;letter-spacing:-1.194px;">3D_現況地形モデル</div>
<div style="position:absolute;left:173.5px;top:132.3px;width:1246.5px;height:671px;background:#d0d4e0"></div>
<div style="position:absolute;left:174.3px;top:133.5px;width:80px;height:14.5px;border-radius:3px 3px 0 0;background:linear-gradient(#fde7c9 0%,#fbd3a0 45%,#f9bb6a 100%)"></div>
<div id="t42" style="position:absolute;left:181px;top:133.0px;font:12px/16px 'Liberation Sans','Noto Sans CJK JP',sans-serif;color:#5a5a66;white-space:nowrap;">物件1 1<span style="display:inline-block;transform:scaleX(0.6402);transform-origin:0 50%;margin-right:-12.953px">ページ</span></div>
<div style="position:absolute;left:254.3px;top:135px;width:1px;height:11.5px;background:#6878a8"></div>
<svg style="position:absolute;left:1397px;top:134px" width="22" height="10" viewBox="0 0 22 10"><path d="M2 4h5.600L4.800 7z" fill="#4a4e60"/><path d="M14 1.800l6 6.400M20 1.800l-6 6.400" stroke="#4a4e60" stroke-width="1.100" fill="none"/></svg>
<div style="position:absolute;left:174.3px;top:146.6px;width:1245.7px;height:656.4px;background:#fff"></div>
<div style="position:absolute;left:174.3px;top:146.6px;width:1241px;height:1.6px;background:#f9b562"></div>
<div style="position:absolute;left:174.3px;top:146.6px;width:1.8px;height:656px;background:#f9b562"></div>
<div style="position:absolute;left:176px;top:148.2px;width:1239.5px;height:1.7px;background:#7d7d7d"></div>
<div style="position:absolute;left:176.1px;top:148.2px;width:1px;height:637px;background:#c8c8c8"></div>
<div style="position:absolute;left:177px;top:150.9px;width:1238px;height:1.1px;background:#fbbe72"></div>
<div style="position:absolute;left:177.2px;top:150px;width:1px;height:636px;background:#fbc88a"></div>
<div style="position:absolute;left:1414.9px;top:147.5px;width:1.6px;height:655px;background:#6a9ae6"></div>
<div style="position:absolute;left:1418.7px;top:146.6px;width:1.4px;height:657px;background:#6a86c8"></div>
<div style="position:absolute;left:1420.1px;top:133px;width:1.2px;height:670.5px;background:#7a7a7a"></div>
<div style="position:absolute;left:178px;top:152px;width:1220.7px;height:617px;background:#000;overflow:hidden"></div>
<div style="position:absolute;left:1399.5px;top:152px;width:15.4px;height:633px;background:#f0f0f0"></div>
<div style="position:absolute;left:178px;top:769px;width:1237px;height:16px;background:#f0f0f0"></div>
<div style="position:absolute;left:1400px;top:358.8px;width:14px;height:204px;background:#cdcdcd"></div>
<div style="position:absolute;left:500px;top:770px;width:579px;height:14.5px;background:#cdcdcd"></div>
<svg style="position:absolute;left:1401.8px;top:155.3px" width="10" height="10" viewBox="0 0 10 10"><path d="M1.500 7L5 3.300L8.500 7" stroke="#505050" stroke-width="1.800" fill="none"/></svg>
<svg style="position:absolute;left:1401.8px;top:755.5px" width="10" height="10" viewBox="0 0 10 10"><path d="M1.500 3L5 6.700L8.500 3" stroke="#505050" stroke-width="1.800" fill="none"/></svg>
<svg style="position:absolute;left:181px;top:772px" width="10" height="10" viewBox="0 0 10 10"><path d="M7 1.500L3.300 5L7 8.500" stroke="#505050" stroke-width="1.800" fill="none"/></svg>
<svg style="position:absolute;left:1385.5px;top:772px" width="10" height="10" viewBox="0 0 10 10"><path d="M3 1.500L6.700 5L3 8.500" stroke="#505050" stroke-width="1.800" fill="none"/></svg>
<div style="position:absolute;left:176px;top:785.4px;width:1239px;height:15.6px;background:#d0d4e0"></div>
<div style="position:absolute;left:176px;top:800.9px;width:1244px;height:1.8px;background:#fdfdfe"></div>
<div style="position:absolute;left:174.3px;top:802.7px;width:1246px;height:1.2px;background:#6a96e0"></div>
<div style="position:absolute;left:178px;top:785.4px;width:64.5px;height:15px;border-radius:0 0 3px 3px;background:linear-gradient(#fbbf75 0%,#fcd3a0 45%,#fde4c4 100%);box-shadow:0 1px 0 #7a9ad8"></div>
<div id="t43" style="position:absolute;left:184.5px;top:786.85px;font:11.5px/15.5px 'Liberation Sans','Noto Sans CJK JP',sans-serif;color:#4a4a55;white-space:nowrap;">編集<span style="display:inline-block;transform:scaleX(0.7246);transform-origin:0 50%;margin-right:-9.500px">モード</span></div>
<div style="position:absolute;left:243.5px;top:785.6px;width:67.5px;height:12.6px;box-sizing:border-box;border:1px solid #7c9ad8;border-top:1.500px solid #6a8ad0;border-radius:0 0 3px 3px;background:linear-gradient(#f0f0f6,#dcdfe8)"></div>
<div id="t44" style="position:absolute;left:250px;top:785.85px;font:11.5px/15.5px 'Liberation Sans','Noto Sans CJK JP',sans-serif;color:#8e93a8;white-space:nowrap;">朱書<span style="display:inline-block;transform:scaleX(0.7065);transform-origin:0 50%;margin-right:-13.500px">きモード</span></div>
<div style="position:absolute;left:313.5px;top:785.6px;width:60.5px;height:12.6px;box-sizing:border-box;border:1px solid #7c9ad8;border-top:1.500px solid #6a8ad0;border-radius:0 0 3px 3px;background:linear-gradient(#f0f0f6,#dcdfe8)"></div>
<div id="t45" style="position:absolute;left:320px;top:785.85px;font:11.5px/15.5px 'Liberation Sans','Noto Sans CJK JP',sans-serif;color:#8e93a8;white-space:nowrap;"><span style="display:inline-block;transform:scaleX(0.7029);transform-origin:0 50%;margin-right:-20.500px">ビューモード</span></div>
<div style="position:absolute;left:1409.5px;top:788.5px;width:1.2px;height:8px;background:#333"></div>
<div style="position:absolute;left:1422.6px;top:133.2px;width:111.4px;height:332.8px;background:#f0f0f0"></div>
<div style="position:absolute;left:1424px;top:135.0px;width:109px;height:18.5px;background:#b1b6c8"></div>
<div id="t46" style="position:absolute;left:1426px;top:137.1px;font:13px/17px 'Liberation Sans','Noto Sans CJK JP',sans-serif;color:#474c63;white-space:nowrap;"><span style="display:inline-block;transform:scaleX(0.6534);transform-origin:0 50%;margin-right:-13.516px">ツール</span></div>
<svg style="position:absolute;left:1505px;top:137.7px" width="28" height="13" viewBox="0 0 28 13"><path d="M3.500 1.500h4M4.500 1.500v5.500M7 1.500v5.500M2 7.500h7M5.500 8v4" stroke="#3c4054" stroke-width="1.200" fill="none"/><path d="M17 2.500l7 7M24 2.500l-7 7" stroke="#3c4054" stroke-width="1.300" fill="none"/></svg>
<div style="position:absolute;left:1422.6px;top:469.3px;width:111.4px;height:333.99999999999994px;background:#f0f0f0"></div>
<div style="position:absolute;left:1424px;top:471.1px;width:109px;height:18.5px;background:#b1b6c8"></div>
<div id="t47" style="position:absolute;left:1426px;top:473.2px;font:13px/17px 'Liberation Sans','Noto Sans CJK JP',sans-serif;color:#474c63;white-space:nowrap;"><span style="display:inline-block;transform:scaleX(0.6202);transform-origin:0 50%;margin-right:-19.750px">フィルタ</span></div>
<svg style="position:absolute;left:1505px;top:473.8px" width="28" height="13" viewBox="0 0 28 13"><path d="M3.500 1.500h4M4.500 1.500v5.500M7 1.500v5.500M2 7.500h7M5.500 8v4" stroke="#3c4054" stroke-width="1.200" fill="none"/><path d="M17 2.500l7 7M24 2.500l-7 7" stroke="#3c4054" stroke-width="1.300" fill="none"/></svg>
<div style="position:absolute;left:1428px;top:498.20000000000005px;width:13px;height:13px;box-sizing:border-box;border:1px solid #333;background:#fff"></div>
<div style="position:absolute;left:1447px;top:495.6px;width:64px;height:19px;box-sizing:border-box;border:1px solid #adadad;background:#e1e1e1"></div>
<div id="t48" style="position:absolute;left:1467.0px;top:497.20000000000005px;font:12px/16px 'Liberation Sans','IPAGothic',sans-serif;color:#111;white-space:nowrap;letter-spacing:0.000px;">要素</div>
<div style="position:absolute;left:1428px;top:521.25px;width:13px;height:13px;box-sizing:border-box;border:1px solid #333;background:#fff"></div>
<div style="position:absolute;left:1447px;top:518.65px;width:64px;height:19px;box-sizing:border-box;border:1px solid #adadad;background:#e1e1e1"></div>
<div id="t49" style="position:absolute;left:1461.5px;top:520.25px;font:12px/16px 'Liberation Sans','IPAGothic',sans-serif;color:#111;white-space:nowrap;letter-spacing:-0.333px;">部分図</div>
<div style="position:absolute;left:1428px;top:544.3000000000001px;width:13px;height:13px;box-sizing:border-box;border:1px solid #333;background:#fff"></div>
<div style="position:absolute;left:1447px;top:541.7px;width:64px;height:19px;box-sizing:border-box;border:1px solid #adadad;background:#e1e1e1"></div>
<div id="t50" style="position:absolute;left:1465.0px;top:543.3000000000001px;font:12px/16px 'Liberation Sans','IPAGothic',sans-serif;color:#111;white-space:nowrap;"><span style="display:inline-block;transform:scaleX(0.7778);transform-origin:0 50%;margin-right:-8.000px">レイヤ</span></div>
<div style="position:absolute;left:1428px;top:567.35px;width:13px;height:13px;box-sizing:border-box;border:1px solid #333;background:#fff"></div>
<div style="position:absolute;left:1447px;top:564.75px;width:64px;height:19px;box-sizing:border-box;border:1px solid #adadad;background:#e1e1e1"></div>
<div id="t51" style="position:absolute;left:1473.5px;top:566.35px;font:12px/16px 'Liberation Sans','IPAGothic',sans-serif;color:#111;white-space:nowrap;letter-spacing:-1.000px;">色</div>
<div style="position:absolute;left:1428px;top:590.4000000000001px;width:13px;height:13px;box-sizing:border-box;border:1px solid #333;background:#fff"></div>
<div style="position:absolute;left:1447px;top:587.8000000000001px;width:64px;height:19px;box-sizing:border-box;border:1px solid #adadad;background:#e1e1e1"></div>
<div id="t52" style="position:absolute;left:1467.5px;top:589.4000000000001px;font:12px/16px 'Liberation Sans','IPAGothic',sans-serif;color:#111;white-space:nowrap;letter-spacing:-0.500px;">線種</div>
<div style="position:absolute;left:1428px;top:613.45px;width:13px;height:13px;box-sizing:border-box;border:1px solid #333;background:#fff"></div>
<div style="position:absolute;left:1447px;top:610.85px;width:64px;height:19px;box-sizing:border-box;border:1px solid #adadad;background:#e1e1e1"></div>
<div id="t53" style="position:absolute;left:1467.5px;top:612.45px;font:12px/16px 'Liberation Sans','IPAGothic',sans-serif;color:#111;white-space:nowrap;letter-spacing:-0.500px;">線幅</div>
<div style="position:absolute;left:1428px;top:636.5000000000001px;width:13px;height:13px;box-sizing:border-box;border:1px solid #333;background:#fff"></div>
<div style="position:absolute;left:1447px;top:633.9000000000001px;width:64px;height:19px;box-sizing:border-box;border:1px solid #adadad;background:#e1e1e1"></div>
<div id="t54" style="position:absolute;left:1453.5px;top:635.5000000000001px;font:12px/16px 'Liberation Sans','IPAGothic',sans-serif;color:#111;white-space:nowrap;">端点<span style="display:inline-block;transform:scaleX(0.7500);transform-origin:0 50%;margin-right:-9.000px">タイプ</span></div>
<div style="position:absolute;left:1428px;top:659.5500000000001px;width:13px;height:13px;box-sizing:border-box;border:1px solid #333;background:#fff"></div>
<div style="position:absolute;left:1447px;top:656.95px;width:64px;height:19px;box-sizing:border-box;border:1px solid #adadad;background:#e1e1e1"></div>
<div id="t55" style="position:absolute;left:1464.5px;top:658.5500000000001px;font:12px/16px 'Liberation Sans','IPAGothic',sans-serif;color:#111;white-space:nowrap;"><span style="display:inline-block;transform:scaleX(0.8056);transform-origin:0 50%;margin-right:-7.000px">ページ</span></div>
<div style="position:absolute;left:1428px;top:682.6px;width:13px;height:13px;box-sizing:border-box;border:1px solid #333;background:#fff"></div>
<div style="position:absolute;left:1447px;top:680.0px;width:64px;height:19px;box-sizing:border-box;border:1px solid #adadad;background:#e1e1e1"></div>
<div id="t56" style="position:absolute;left:1450.0px;top:681.6px;font:12px/16px 'Liberation Sans','IPAGothic',sans-serif;color:#111;white-space:nowrap;">文字<span style="display:inline-block;transform:scaleX(0.7083);transform-origin:0 50%;margin-right:-14.000px">スタイル</span></div>
<div style="position:absolute;left:1428px;top:705.6500000000001px;width:13px;height:13px;box-sizing:border-box;border:1px solid #333;background:#fff"></div>
<div style="position:absolute;left:1447px;top:703.0500000000001px;width:64px;height:19px;box-sizing:border-box;border:1px solid #adadad;background:#e1e1e1"></div>
<div id="t57" style="position:absolute;left:1456.0px;top:704.6500000000001px;font:12px/16px 'Liberation Sans','IPAGothic',sans-serif;color:#111;white-space:nowrap;letter-spacing:-0.500px;">仮想要素</div>
<div style="position:absolute;left:1430px;top:726.3px;width:81px;height:19px;box-sizing:border-box;border:1px solid #adadad;background:#e1e1e1"></div>
<div id="t58" style="position:absolute;left:1454.5px;top:727.9px;font:12px/16px 'Liberation Sans','IPAGothic',sans-serif;color:#111;white-space:nowrap;letter-spacing:-1.000px;">全OFF</div>
<div style="position:absolute;left:1430px;top:749.3499999999999px;width:81px;height:19px;box-sizing:border-box;border:1px solid #adadad;background:#e1e1e1"></div>
<div id="t59" style="position:absolute;left:1447.5px;top:750.9499999999999px;font:12px/16px 'Liberation Sans','IPAGothic',sans-serif;color:#111;white-space:nowrap;letter-spacing:-0.500px;">図面参照</div>
<div style="position:absolute;left:1430px;top:772.4px;width:81px;height:19px;box-sizing:border-box;border:1px solid #adadad;background:#e1e1e1"></div>
<div id="t60" style="position:absolute;left:1454.5px;top:774.0px;font:12px/16px 'Liberation Sans','IPAGothic',sans-serif;color:#111;white-space:nowrap;"><span style="display:inline-block;transform:scaleX(0.6667);transform-origin:0 50%;margin-right:-16.000px">リセット</span></div>
<div style="position:absolute;left:1426px;top:795px;width:90px;height:8px;overflow:hidden"><div style="position:absolute;left:2px;top:-2.500px;font:12px/16px 'Liberation Sans','IPAGothic',sans-serif;color:#111;white-space:nowrap;letter-spacing:-0.500px">※[Ctrl+Alt]キー</div></div>
<div style="position:absolute;left:1518px;top:490.5px;width:15px;height:312.5px;background:#f0f0f0"></div>
<div style="position:absolute;left:1519px;top:506.5px;width:13px;height:265.5px;background:#cdcdcd"></div>
<svg style="position:absolute;left:1520.5px;top:493.5px" width="10" height="10" viewBox="0 0 10 10"><path d="M1.500 7L5 3.300L8.500 7" stroke="#505050" stroke-width="1.800" fill="none"/></svg>
<svg style="position:absolute;left:1520.5px;top:789px" width="10" height="10" viewBox="0 0 10 10"><path d="M1.500 3L5 6.700L8.500 3" stroke="#505050" stroke-width="1.800" fill="none"/></svg>
<div style="position:absolute;left:0px;top:803.8px;width:1536px;height:1.6px;background:#808088"></div>
<div style="position:absolute;left:0px;top:805.3px;width:1536px;height:20.7px;background:linear-gradient(#e4e5eb 0%,#d2d4dc 14%,#b4b8c4 33%,#aaaeba 46%,#b6b9c4 62%,#c8c9d0 100%)"></div>
<div id="t61" style="position:absolute;left:3.5px;top:808.3px;font:12px/16px 'Liberation Sans','IPAGothic',sans-serif;color:#333;white-space:nowrap;">[表示]-[3D]-[<span style="display:inline-block;transform:scaleX(0.7042);transform-origin:0 50%;margin-right:-24.844px">トラックボール</span>]</div>
<div id="t62" style="position:absolute;left:658.8px;top:808.3px;font:12px/16px 'Liberation Sans','IPAGothic',sans-serif;color:#444;white-space:nowrap;">移動<span style="display:inline-block;transform:scaleX(0.6500);transform-origin:0 50%;margin-right:-8.400px">する</span>位置<span style="display:inline-block;transform:scaleX(0.6500);transform-origin:0 50%;margin-right:-4.200px">を</span>指示<span style="display:inline-block;transform:scaleX(0.6500);transform-origin:0 50%;margin-right:-29.400px">してください。</span></div>
<div style="position:absolute;left:134.5px;top:807px;width:1.2px;height:17px;background:#9a9aa0"></div>
<div style="position:absolute;left:135.7px;top:807px;width:1px;height:17px;background:#e8e8ee"></div>
<div style="position:absolute;left:1337px;top:809px;width:197.5px;height:14.5px;background:#f0f0f4"></div>
<div style="position:absolute;left:1333px;top:807px;width:1.2px;height:17px;background:#9a9aa0"></div>
<div style="position:absolute;left:1334.2px;top:807px;width:1px;height:17px;background:#e8e8ee"></div>
<div id="t63" style="position:absolute;left:1338.5px;top:808.3px;font:12px/16px 'Liberation Sans','IPAGothic',sans-serif;color:#333;white-space:nowrap;letter-spacing:-0.698px;">(-134642909.817, -31340300.944, 0.000)</div>
<svg style="position:absolute;left:178px;top:152px" width="1220.7" height="617" viewBox="0 0 1220.7 617">
<path d="M403.2 251.2h9.400M407.9 246.5v9.400" stroke="#b00000" stroke-width="1.200" shape-rendering="crispEdges"/>
<path d="M58.5 522v18.500" stroke="#00d800" stroke-width="1" shape-rendering="crispEdges"/>
<rect x="39" y="540.3" width="38.500" height="38.600" fill="#0000ff"/>
<path d="M77.5 560h19.300" stroke="#c80000" stroke-width="1.200" shape-rendering="crispEdges"/>
<path d="M78 549v22" stroke="#d8d8e8" stroke-width="1" shape-rendering="crispEdges"/>
<text x="47.30000000000001" y="566.4" font-family="'Liberation Sans',sans-serif" font-size="18.500" fill="#a8a870" textLength="10.500" lengthAdjust="spacingAndGlyphs">X</text>
<text x="59.30000000000001" y="566.4" font-family="'Liberation Sans',sans-serif" font-size="18.500" fill="#e8e800" textLength="10.800" lengthAdjust="spacingAndGlyphs">Y</text>
<g font-family="'Liberation Sans',sans-serif" font-size="10.800" fill="#ffff00" stroke="#b0b000" stroke-width="0.450" paint-order="stroke">
<text x="530.8" y="75.0" textLength="23" lengthAdjust="spacingAndGlyphs">62.0</text>
<text x="540.5" y="89.2" textLength="23" lengthAdjust="spacingAndGlyphs">62.0</text>
<text x="481.0" y="133.0" textLength="23" lengthAdjust="spacingAndGlyphs">59.0</text>
<text x="430.0" y="148.5" textLength="23" lengthAdjust="spacingAndGlyphs">59.0</text>
<text x="577.0" y="176.0" textLength="23" lengthAdjust="spacingAndGlyphs">63.0</text>
<text x="598.2" y="187.0" textLength="23" lengthAdjust="spacingAndGlyphs">63.0</text>
<text x="620.2" y="170.5" textLength="23" lengthAdjust="spacingAndGlyphs">62.0</text>
<text x="700.8" y="158.8" textLength="23" lengthAdjust="spacingAndGlyphs">62.0</text>
<text x="672.0" y="187.6" textLength="23" lengthAdjust="spacingAndGlyphs">62.0</text>
<text x="707.5" y="193.0" textLength="23" lengthAdjust="spacingAndGlyphs">62.0</text>
<text x="714.5" y="204.5" textLength="23" lengthAdjust="spacingAndGlyphs">62.0</text>
<text x="532.0" y="209.5" textLength="23" lengthAdjust="spacingAndGlyphs">58.0</text>
<text x="538.8" y="224.5" textLength="23" lengthAdjust="spacingAndGlyphs">58.0</text>
<text x="445.8" y="214.8" textLength="23" lengthAdjust="spacingAndGlyphs">59.0</text>
<text x="409.3" y="224.5" textLength="23" lengthAdjust="spacingAndGlyphs">59.0</text>
<text x="680.0" y="231.8" textLength="23" lengthAdjust="spacingAndGlyphs">62.0</text>
<text x="739.5" y="151.2" textLength="23" lengthAdjust="spacingAndGlyphs">64.0</text>
<text x="741.2" y="223.5" textLength="23" lengthAdjust="spacingAndGlyphs">63.0</text>
<text x="738.0" y="238.8" textLength="23" lengthAdjust="spacingAndGlyphs">63.0</text>
<text x="741.0" y="260.8" textLength="23" lengthAdjust="spacingAndGlyphs">63.0</text>
<text x="664.8" y="250.5" textLength="23" lengthAdjust="spacingAndGlyphs">62.0</text>
<text x="648.2" y="276.2" textLength="23" lengthAdjust="spacingAndGlyphs">62.0</text>
<text x="709.5" y="288.0" textLength="23" lengthAdjust="spacingAndGlyphs">62.0</text>
<text x="645.4" y="300.0" textLength="23" lengthAdjust="spacingAndGlyphs">60.0</text>
<text x="812.0" y="315.0" textLength="23" lengthAdjust="spacingAndGlyphs">61.0</text>
<text x="608.9" y="314.8" textLength="23" lengthAdjust="spacingAndGlyphs">59.0</text>
<text x="538.0" y="241.2" textLength="23" lengthAdjust="spacingAndGlyphs">58.0</text>
<text x="573.9" y="258.8" textLength="23" lengthAdjust="spacingAndGlyphs">58.0</text>
<text x="587.0" y="273.4" textLength="23" lengthAdjust="spacingAndGlyphs">58.0</text>
<text x="547.5" y="281.0" textLength="23" lengthAdjust="spacingAndGlyphs">58.0</text>
<text x="549.3" y="294.6" textLength="23" lengthAdjust="spacingAndGlyphs">58.0</text>
<text x="584.9" y="296.2" textLength="23" lengthAdjust="spacingAndGlyphs">58.0</text>
<text x="549.3" y="307.9" textLength="23" lengthAdjust="spacingAndGlyphs">58.0</text>
<text x="540.8" y="324.2" textLength="23" lengthAdjust="spacingAndGlyphs">58.0</text>
<text x="592.6" y="338.4" textLength="23" lengthAdjust="spacingAndGlyphs">58.0</text>
<text x="542.6" y="356.8" textLength="23" lengthAdjust="spacingAndGlyphs">58.0</text>
<text x="578.2" y="355.0" textLength="23" lengthAdjust="spacingAndGlyphs">58.0</text>
<text x="611.8" y="355.6" textLength="23" lengthAdjust="spacingAndGlyphs">58.0</text>
<text x="658.9" y="356.0" textLength="23" lengthAdjust="spacingAndGlyphs">58.0</text>
<text x="539.9" y="376.8" textLength="23" lengthAdjust="spacingAndGlyphs">58.0</text>
<text x="533.2" y="396.6" textLength="23" lengthAdjust="spacingAndGlyphs">59.0</text>
<text x="611.8" y="402.0" textLength="23" lengthAdjust="spacingAndGlyphs">59.0</text>
<text x="507.0" y="392.2" textLength="23" lengthAdjust="spacingAndGlyphs">61.0</text>
<text x="743.2" y="388.2" textLength="23" lengthAdjust="spacingAndGlyphs">58.0</text>
<text x="708.8" y="397.0" textLength="23" lengthAdjust="spacingAndGlyphs">58.0</text>
<text x="734.9" y="407.6" textLength="23" lengthAdjust="spacingAndGlyphs">58.0</text>
<text x="687.6" y="418.2" textLength="23" lengthAdjust="spacingAndGlyphs">58.0</text>
<text x="713.2" y="420.2" textLength="23" lengthAdjust="spacingAndGlyphs">58.0</text>
<text x="678.2" y="430.6" textLength="23" lengthAdjust="spacingAndGlyphs">58.0</text>
<text x="589.8" y="446.2" textLength="23" lengthAdjust="spacingAndGlyphs">59.0</text>
<text x="389.9" y="320.6" textLength="23" lengthAdjust="spacingAndGlyphs">62.0</text>
<text x="472.6" y="325.4" textLength="23" lengthAdjust="spacingAndGlyphs">61.0</text>
<text x="456.1" y="339.6" textLength="23" lengthAdjust="spacingAndGlyphs">62.0</text>
<text x="479.2" y="367.5" textLength="23" lengthAdjust="spacingAndGlyphs">62.0</text>
<text x="418.0" y="377.8" textLength="23" lengthAdjust="spacingAndGlyphs">62.0</text>
<text x="466.0" y="386.9" textLength="23" lengthAdjust="spacingAndGlyphs">63.0</text>
<text x="418.0" y="396.0" textLength="23" lengthAdjust="spacingAndGlyphs">65.0</text>
<text x="404.2" y="413.8" textLength="23" lengthAdjust="spacingAndGlyphs">62.0</text>
<text x="432.0" y="414.4" textLength="23" lengthAdjust="spacingAndGlyphs">62.0</text>
<text x="401.8" y="425.0" textLength="23" lengthAdjust="spacingAndGlyphs">62.0</text>
<text x="466.8" y="435.9" textLength="23" lengthAdjust="spacingAndGlyphs">62.0</text>
<text x="426.4" y="440.4" textLength="23" lengthAdjust="spacingAndGlyphs">62.0</text>
<text x="394.9" y="444.2" textLength="23" lengthAdjust="spacingAndGlyphs">62.0</text>
<text x="454.5" y="449.0" textLength="23" lengthAdjust="spacingAndGlyphs">62.0</text>
<text x="528.0" y="451.2" textLength="23" lengthAdjust="spacingAndGlyphs">62.0</text>
<text x="660.8" y="456.6" textLength="23" lengthAdjust="spacingAndGlyphs">58.0</text>
<text x="482.0" y="464.6" textLength="23" lengthAdjust="spacingAndGlyphs">63.0</text>
<text x="457.0" y="472.2" textLength="23" lengthAdjust="spacingAndGlyphs">63.0</text>
<text x="391.1" y="476.9" textLength="23" lengthAdjust="spacingAndGlyphs">62.0</text>
<text x="621.4" y="532.5" textLength="23" lengthAdjust="spacingAndGlyphs">57.0</text>
<text x="603.9" y="544.1" textLength="23" lengthAdjust="spacingAndGlyphs">57.0</text>
<text x="507.9" y="555.6" textLength="23" lengthAdjust="spacingAndGlyphs">60.0</text>
<text x="553.0" y="570.6" textLength="23" lengthAdjust="spacingAndGlyphs">58.0</text>
<text x="591.6" y="573.5" textLength="23" lengthAdjust="spacingAndGlyphs">57.0</text>
<text x="559.8" y="584.4" textLength="23" lengthAdjust="spacingAndGlyphs">58.0</text>
<text x="512.9" y="587.5" textLength="23" lengthAdjust="spacingAndGlyphs">60.0</text>
<text x="528.9" y="598.4" textLength="23" lengthAdjust="spacingAndGlyphs">58.0</text>
</g>
<path d="M510.8 40.0L512.8 43.5L514.5 49.2L517.0 53.5L518.6 56.3L520.0 59.2L521.0 62.5L522.5 65.5L524.6 68.2L526.5 71.0L529.0 76.8L532.0 80.5L535.8 85.0L539.5 88.0M528.9 78.0L532.0 81.8L535.8 84.2L539.5 87.4L540.8 93.0L543.9 96.1L548.2 100.5L549.5 104.2L554.5 108.0L556.5 111.0L558.2 114.2L561.1 117.1L563.2 120.5L564.5 124.9L569.5 128.0L572.1 131.1L574.5 134.2L576.6 137.7L579.5 140.5L580.8 146.1L583.1 148.5L585.8 150.5L587.8 153.9L590.8 156.8L594.5 161.8L596.4 164.9L598.2 169.2L602.0 174.2L603.1 177.7L604.5 181.0M554.5 90.5L558.2 94.2L562.0 98.6L564.4 101.0L567.0 103.0L569.4 105.6L572.0 108.0L575.1 109.9L577.0 113.0L579.2 115.5L582.0 117.4L584.3 120.7L587.0 123.6L589.3 126.3L592.0 128.6L595.1 130.2L597.0 133.0L600.1 134.9L602.0 138.0L604.8 140.2L607.0 143.0L609.7 145.7L612.0 148.6L614.4 151.2L617.0 153.6L620.1 155.2L623.2 156.8L627.0 160.5L630.0 162.0L633.2 163.0L639.5 162.4L645.8 163.0L649.5 160.5L654.0 158.0M555.1 91.1L557.3 93.8L558.9 96.8L560.9 99.4L563.2 101.8L565.8 106.8L568.1 109.4L570.8 111.8L572.9 114.7L574.5 118.0L576.3 121.7L579.5 124.2L582.0 129.2L584.3 132.5L587.0 135.5L589.0 139.0L592.0 141.8L594.5 146.1L597.3 149.4L599.5 153.0L603.2 158.0L607.0 161.1L609.5 165.5L611.7 168.1L613.2 171.1L617.0 176.1L618.2 181.0M509.5 83.6L512.0 88.6L514.6 90.7L517.0 93.0L519.5 95.5L522.0 98.0L524.5 103.0L527.4 105.7L530.8 108.0L533.2 111.2L535.8 114.2L538.4 116.9L540.8 119.9L543.6 122.0L545.8 124.9L548.4 127.5L550.8 130.5L554.5 135.5L556.6 138.4L559.5 140.5L563.9 144.9L563.2 148.6L566.0 150.5L568.2 153.0L570.7 155.6L573.2 158.0L575.6 161.3L578.2 164.2L582.0 169.2L585.1 171.9L587.0 175.5L588.9 178.3L590.8 181.0M506.8 95.5L509.5 100.5L513.9 103.6L515.1 108.0L517.5 111.0L520.8 113.0L525.8 116.8L529.5 121.1L532.7 122.9L534.5 126.1L535.8 129.2L540.8 133.0L543.9 138.0L545.8 141.8L550.8 144.2L554.5 149.2L555.8 153.0L558.4 155.4L560.8 158.0L562.0 160.5L564.5 163.0L567.0 165.5L569.8 168.4L572.0 171.8L574.3 175.0L577.0 178.0L579.5 181.0M502.6 114.5L505.1 118.6L508.0 120.8L510.8 123.0L513.2 127.4L518.2 130.5L521.3 133.2L523.2 136.8L525.4 140.1L528.2 143.0L532.0 148.0L537.0 151.8L540.0 153.0L543.2 153.6L547.0 154.9L545.8 159.2L550.8 163.0L552.9 165.8L555.8 168.0L557.7 171.6L560.8 174.2L563.1 177.7L565.8 181.0M494.5 119.2L497.0 122.4L500.1 124.9L503.2 127.4L505.8 130.5L509.5 134.2L512.0 139.2L515.8 141.8L513.9 145.5L519.5 148.0L524.5 151.8L528.2 156.8L531.2 158.4L533.2 161.1L532.6 164.2L535.8 169.2L538.0 172.0L540.8 174.2L544.1 177.4L547.0 181.0M478.0 116.1L480.8 119.9L484.5 122.4L487.7 123.4L490.8 124.9L493.2 127.3L494.5 130.5L496.4 135.5L499.5 137.6L502.0 140.5L505.8 145.5L507.6 150.5L512.0 153.0L513.2 156.8L518.2 159.2L519.5 164.2L524.5 166.8L523.2 169.2L526.4 171.1L527.0 174.9L529.7 176.9L532.0 179.2L533.9 181.0M530.1 178.0L532.5 181.0L535.8 183.0L539.0 185.1L540.8 188.6L543.8 191.0L545.8 194.2L548.2 197.4L550.8 200.5L552.4 203.8L555.1 206.1L559.5 209.2L563.2 214.2L565.2 217.2L567.6 219.9L572.0 224.2L575.8 229.2L578.9 231.1L580.8 234.2L584.5 238.6L587.0 242.4L590.8 246.1L594.5 250.5M543.2 178.0L546.7 180.0L548.2 183.6L550.6 186.3L553.2 188.6L556.0 190.9L558.2 193.6L561.1 195.7L563.2 198.6L565.8 203.0L567.9 205.8L570.8 208.0L572.9 210.9L575.8 213.0L578.2 215.6L580.8 218.0L584.5 223.0L588.2 228.0L592.0 231.8L594.4 235.0L597.0 238.0L599.3 240.7L602.0 243.0L603.9 246.6L607.0 249.2M563.2 178.0L565.2 180.6L567.4 182.9L569.6 185.2L572.0 187.4L575.7 190.3L578.2 194.2L579.9 197.3L582.3 199.9L584.6 202.4L587.0 204.9L590.2 206.9L592.2 210.1L594.5 213.0L596.7 216.2L600.2 218.2L602.0 221.8L604.6 224.6L606.6 227.9L609.5 230.5L612.5 233.0L613.9 236.9L617.0 239.2L619.3 242.3L622.1 245.0L624.5 248.0M575.8 178.0L578.1 180.6L580.8 183.0L583.0 186.1L585.7 188.9L588.2 191.8L590.0 194.6L592.9 196.5L595.0 199.1L597.0 201.8L599.1 205.0L602.0 207.6L604.5 210.5L606.9 212.7L608.3 215.8L610.8 218.0L612.7 221.4L615.9 223.7L618.2 226.8L621.2 228.8L623.3 231.7L625.8 234.2L627.9 236.7L630.0 239.2L632.0 241.8L633.5 244.7L636.6 246.4L638.2 249.2M588.2 178.0L590.3 180.9L593.2 183.0L596.8 185.7L599.5 189.2L602.3 191.1L604.5 193.6L606.8 196.1L609.5 198.0L614.5 199.9L616.4 203.6L613.9 201.8L610.1 198.0L612.0 193.0L611.4 187.4L609.5 183.0L604.5 181.0M620.8 179.2L622.9 182.1L625.8 184.2L627.2 188.2L629.5 191.8L631.9 195.6L634.5 199.2L636.9 203.0L639.5 206.8L642.0 208.9L644.3 211.1L647.0 213.0L649.5 214.9L647.0 215.5L648.2 219.2L653.2 221.8L655.2 224.8L657.0 228.0L660.8 231.8L663.2 236.8L668.2 240.5L670.6 243.4L673.2 246.1L675.5 249.1L678.2 251.8M525.1 208.0L527.6 204.9L528.2 211.1L525.1 208.0M533.2 216.8L535.8 218.6L538.2 221.1M553.2 229.9L558.2 231.8L563.2 230.5L565.1 234.2L567.0 239.2L563.2 238.0L559.5 239.2M729.2 141.1L732.0 145.5L734.5 149.3L737.0 153.0L739.2 157.0L742.0 160.5L743.6 164.4L745.8 168.0L747.5 171.8L750.8 174.2L752.0 178.0L755.1 179.2L756.2 182.4L757.6 185.5L758.2 191.8L756.4 197.4L754.4 200.3L752.0 203.0L749.6 205.6L747.0 208.0L744.5 210.5L742.0 213.0L738.2 216.8L737.0 221.8L733.2 225.5L731.4 230.5L732.0 235.5L734.5 239.2M742.0 149.2L745.8 151.1L748.2 149.9M758.9 149.9L762.0 153.0L764.5 156.1M652.6 158.0L654.5 162.4L657.4 164.6L660.8 166.1L664.0 168.8L667.0 171.8L670.1 173.2L673.2 174.2L677.0 176.1L682.0 176.8L686.4 178.0L688.2 181.8L685.8 187.4L688.3 190.9L692.0 193.0L694.5 193.6L693.9 199.2L695.8 204.9L691.4 208.0L689.5 213.6L685.8 215.5L683.2 218.0L681.7 221.4L678.2 223.0L679.5 224.9L682.3 222.2L685.8 220.5L688.9 218.4L692.0 216.1L695.3 213.5L698.2 210.5L700.8 208.4L703.2 206.1L707.0 201.8L710.1 196.8L712.0 199.9L714.4 197.5L717.0 195.5L723.2 194.2L729.5 195.5L731.4 196.8M731.4 205.5L728.9 207.8L727.0 210.5L723.2 215.5L721.9 219.2L720.8 223.0L720.4 226.8L719.5 230.5L718.1 233.9L718.9 237.5L718.9 241.0M735.1 231.1L740.8 229.9L745.8 231.8L744.5 236.8L738.2 238.0L736.4 234.7L735.1 231.1M740.8 225.5L744.5 224.9L745.8 228.6L742.0 229.2L740.8 225.5M713.5 164.9L713.8 165.4M714.2 209.2L714.8 209.8M719.5 228.0L718.9 234.2L719.5 238.0L720.1 241.8L722.0 246.8L724.0 249.8L725.8 253.0L727.3 255.8L728.9 258.6L728.2 261.1L726.6 264.3L723.2 265.5L719.5 268.6L716.4 269.9L715.1 273.0L709.5 275.2L704.5 274.2L699.5 271.1L696.8 269.1L694.5 266.8L692.4 263.9L689.5 261.8L686.6 260.0L684.5 257.4L682.0 258.6L679.5 254.9L677.6 251.1M732.6 228.0L731.4 233.0L732.3 236.1L733.2 239.2L734.5 244.2L739.5 248.0M735.8 230.5L734.5 235.5L738.2 239.9L744.5 240.5L748.3 239.8L752.0 238.6M739.5 246.8L743.4 245.3L747.0 243.0L744.4 247.1L743.2 251.8L747.5 250.3L752.0 250.5L754.5 252.4L751.9 249.7L749.5 246.8M759.5 240.5L761.4 243.0L760.1 243.6M761.4 245.5L766.4 248.6L765.1 246.8M752.0 258.0L755.1 263.0L758.2 268.0L759.5 269.2L764.5 266.8L769.5 264.9L774.5 262.4L779.5 258.6L784.5 256.1L787.0 253.0L792.0 249.2L794.4 246.9L797.0 244.9M722.0 278.6L727.0 278.0L733.2 279.2L736.4 283.0L739.5 281.8L743.3 281.1L747.0 279.9L753.2 278.6L757.0 280.5L762.0 277.4L765.3 276.6L768.2 274.9L773.2 272.4L778.2 268.6L783.2 264.9L788.2 261.1L789.9 257.9L793.2 256.8L798.2 253.0L801.1 251.2L803.2 248.6L807.6 244.9M719.5 283.6L724.5 284.9L730.8 285.5L734.2 286.2L737.0 288.2L743.2 288.0L749.5 286.8L753.3 286.5L757.0 285.5L763.2 284.9L767.0 282.4L772.0 279.9L774.8 277.6L778.2 276.8L783.2 273.6L788.2 269.9L790.8 267.8L793.2 265.5L797.0 263.6L795.8 261.8L799.5 261.1L802.4 259.4L804.5 256.8L807.0 254.5L809.5 252.4L812.1 250.3L814.5 248.0L818.0 245.5M672.0 284.9L675.8 288.0L677.6 291.8L682.0 295.5L681.4 297.4L687.0 299.2L692.0 301.8L697.0 304.2L699.9 306.2L703.2 307.4L706.3 308.7L709.5 309.9L715.8 310.5L719.5 313.0L725.8 314.2L729.5 314.3L733.2 314.5L735.8 317.4L738.2 314.2L742.0 314.9L747.0 314.2L750.6 315.6L754.5 315.5L759.5 314.2L765.8 314.2L770.8 311.8L775.8 311.1L779.5 308.6L784.5 308.6L789.5 307.4L795.8 306.8L799.5 303.0L803.2 299.2L808.2 297.4L810.8 294.2L815.1 292.4L819.5 295.5L823.9 299.9L825.1 296.8L830.8 295.5L834.5 291.8L838.2 288.0L838.2 284.2M667.0 296.8L672.0 300.5L674.9 302.8L678.2 304.2L683.2 308.0L686.5 309.7L689.5 311.8L692.1 314.3L695.8 314.2L698.8 315.3L701.4 317.4L702.6 322.4L705.8 320.5L709.4 321.6L713.2 321.8L717.7 322.6L722.0 323.6L725.1 324.6L728.2 325.5L733.2 327.4L736.5 329.3L740.1 330.5L743.6 329.7L747.0 328.6L750.7 329.3L754.5 329.2L758.2 328.2L762.0 328.6L767.0 332.4L772.0 329.2L777.0 326.8L783.2 325.5L786.0 323.3L789.5 322.4L795.8 321.8L800.8 324.9L805.8 321.1L810.8 319.2L814.5 317.4L815.8 314.2M833.2 313.0L837.0 315.2L841.4 315.5M672.0 315.5L675.0 317.3L678.2 318.6L681.6 319.4L684.5 321.1L687.9 322.2L690.8 324.2L693.9 325.2L696.4 327.4L698.9 331.8L697.6 333.6L701.1 334.3L704.5 333.6L708.2 334.9L712.0 335.5L715.6 337.2L719.5 337.4L723.4 337.9L727.0 339.2L731.4 340.5L733.2 345.5L734.5 341.8L739.5 340.5L744.5 342.4L749.5 341.1L754.5 341.8L759.5 340.5L764.5 341.8L766.7 344.3L768.9 346.8L770.8 345.5L775.8 343.6L778.7 342.1L782.0 341.8L785.2 341.2L788.2 339.9L791.6 339.7L794.5 338.0L798.2 337.4L802.6 335.5L804.9 338.1L806.4 341.1L809.5 341.1L813.2 338.0L818.2 334.2L823.2 331.8L826.3 329.8L828.2 326.8L832.0 324.9L837.0 322.4L840.8 324.2L844.5 328.0M672.0 325.5L674.9 327.5L678.2 328.6L681.4 330.1L684.5 331.8L688.1 332.4L690.8 334.9L695.1 338.0L694.7 341.5L695.8 344.9L700.8 343.6L707.0 344.9L710.1 345.8L713.2 346.8L719.5 348.0L722.7 348.6L725.8 349.9L730.8 351.1L733.2 356.1L738.2 354.2L744.5 355.5L750.8 356.1L757.0 357.4L763.2 358.6L766.4 357.6L769.5 356.1L773.2 359.2L777.0 359.1L780.8 358.6L782.6 355.5L787.0 358.0L792.0 355.5L795.3 355.3L798.2 353.6L803.2 351.8L808.2 349.2L812.0 351.8L814.3 354.6L815.8 358.0L819.2 355.9L822.0 353.0L827.0 349.9L830.6 348.3L833.2 345.5L836.7 344.2L839.5 341.8L842.6 340.4L845.8 339.2L847.0 337.4M672.0 338.0L677.0 341.1L680.0 342.7L682.6 344.9L682.4 349.0L683.2 353.0L683.6 356.3L684.0 359.7L684.5 363.0L684.4 366.5L685.9 369.6L686.4 373.0L688.1 376.6L687.6 380.5L688.1 384.2L688.2 388.0L688.9 391.8L687.6 395.5L686.6 399.2L686.4 403.0L685.3 407.0L684.5 411.0L684.2 414.2L683.3 417.3L682.6 420.5L681.3 424.1L680.8 428.0L679.5 431.7L678.2 435.5M772.0 386.1L775.8 387.4L779.2 386.1L782.0 383.6L785.1 382.3L788.2 381.1L791.6 380.4L794.5 378.6L797.9 378.1L800.8 376.1L804.2 375.6L807.0 373.6L812.0 371.8L815.8 369.2L819.5 371.8L820.8 375.5L823.2 376.1L824.5 373.0L829.5 369.9L834.5 366.1L837.4 363.7L840.8 361.8L845.8 358.6L850.1 355.5M775.8 387.4L772.0 390.5L767.0 394.2L762.0 396.1L758.1 396.6L754.5 398.0L751.0 400.1L747.0 400.5L742.0 404.2L739.9 406.9L737.7 409.5L734.5 411.0L731.1 412.2L728.2 414.2L725.5 417.2L722.0 419.2L718.9 421.1L715.8 423.0L712.7 425.6L709.5 428.0L706.4 430.5L703.2 433.0L700.3 435.7L697.0 438.0L693.8 439.8L690.8 441.8L684.5 440.5M727.0 404.2L730.1 402.4L732.0 404.9L728.9 406.8L727.0 404.2M722.0 408.0L725.1 406.1L727.0 408.6L723.9 410.5L722.0 408.0M709.5 404.9L712.6 403.0L714.5 405.5L711.4 407.4L709.5 404.9M713.2 398.0L716.4 396.1L718.2 398.6L715.1 400.5L713.2 398.0M703.2 414.2L706.4 412.4L708.2 414.9L705.1 416.8L703.2 414.2M709.5 420.5L712.6 418.6L714.5 421.1L711.4 423.0L709.5 420.5M694.5 428.0L697.6 426.1L699.5 428.6L696.4 430.5L694.5 428.0M700.8 424.2L703.9 422.4L705.8 424.9L702.6 426.8L700.8 424.2M687.0 434.2L690.1 432.4L692.0 434.9L688.9 436.8L687.0 434.2M719.5 411.8L722.6 409.9L724.5 412.4L721.4 414.2L719.5 411.8M590.8 248.0L593.2 251.8L597.0 254.2L600.1 257.4L603.2 260.5L606.2 263.8L609.5 266.8L612.3 270.2L615.8 273.0L617.9 275.4L620.4 277.6L622.0 280.5L625.8 285.5L627.0 291.1L623.2 295.5L622.0 300.5L619.5 303.6L617.2 306.0L614.5 308.0L611.6 310.8L609.5 314.2L605.8 318.0L609.5 321.8L614.5 325.5L619.5 327.4L623.2 324.2L628.2 326.8L631.1 325.0L634.5 324.9L640.8 323.6L647.0 322.4L650.0 321.2L653.2 320.5L656.5 320.0L659.5 318.6L662.0 321.8L665.7 323.1L669.5 323.6L672.0 324.5M618.2 315.5L622.0 312.4L623.2 315.5L620.1 318.6L618.2 315.5M603.2 248.0L606.4 251.4L609.5 254.9L612.3 258.6L615.8 261.8L618.2 264.9L620.8 268.0L623.7 270.1L625.8 273.0L628.8 275.3L630.8 278.6L633.5 281.2L635.8 284.2L637.9 287.1L640.8 289.2L645.8 291.8L649.5 289.2L653.2 293.0L655.9 295.3L658.2 298.0L661.1 300.2L663.2 303.0L666.0 305.2L668.2 308.0L672.0 310.5L671.0 313.6L672.6 315.8M622.0 248.0L625.7 250.6L628.2 254.2L630.4 256.7L632.9 258.9L634.5 261.8L636.4 264.4L639.6 266.0L640.8 269.2L643.8 272.5L647.0 275.5L649.7 277.8L652.0 280.5L657.0 284.2L660.6 285.3L663.2 288.0L667.0 293.0L667.2 296.5M635.8 248.0L638.6 251.4L642.0 254.2L645.2 257.3L648.2 260.5L651.5 262.2L653.2 265.5L655.7 267.7L657.3 270.6L659.5 273.0L661.8 275.4L663.4 278.2L665.8 280.5L668.6 283.3L672.0 285.5M603.2 351.0L606.6 349.2L609.5 346.8L613.3 344.4L617.0 341.8L621.0 340.5L624.5 338.0L628.4 336.4L632.0 334.2L636.4 333.2L640.8 331.8L645.0 330.1L649.5 330.5L653.8 331.6L658.2 331.8L661.7 334.2L665.8 335.5L668.7 337.0L671.7 338.6L674.5 340.5L677.8 343.2L682.0 344.2L683.5 347.5L683.2 351.0M574.5 248.0L570.6 250.3L567.0 253.0L564.5 258.0L568.2 260.5L570.8 265.5L575.8 269.2L573.2 271.8L579.5 273.0L580.8 279.2L577.8 281.8L577.0 285.5L580.8 286.8L585.1 285.7L589.5 285.5L594.5 284.2L592.0 280.5L587.0 276.8L582.0 273.0M580.8 260.5L587.0 261.8L592.0 260.5L592.9 263.8L594.5 266.8L594.9 270.2L597.0 273.0L600.8 278.0L603.2 281.8L602.0 285.5L597.0 288.0L592.0 289.2M575.8 290.5L582.0 291.8L587.0 290.5L592.0 291.8L597.0 294.2L600.8 298.0L598.2 303.0L593.2 306.8L590.8 304.2L584.5 303.0L578.2 303.0L575.8 306.8L572.0 310.5L574.5 315.5L578.2 315.5L581.4 314.2L584.5 313.0L589.5 309.2L593.2 308.0L592.0 313.0L589.5 318.0L588.0 321.7L587.0 325.5L585.3 329.8L584.5 334.2L587.0 339.2L585.8 345.5L587.0 351.0M565.8 313.0L569.5 311.8L570.8 316.8L565.8 318.0L565.8 313.0M550.8 323.0L555.1 322.2L559.5 321.8L565.8 320.5L570.1 321.1L574.5 321.8L575.8 318.7L577.0 315.5M553.2 328.0L559.5 326.8L562.5 328.4L565.8 329.2L569.5 328.0L570.8 331.1L572.0 334.2L574.6 336.7L577.0 339.2L572.0 340.5L570.6 343.9L568.2 346.8L565.8 351.0M548.2 341.8L549.8 338.7L552.0 336.1L553.2 333.0L556.4 334.3L559.5 335.5L563.2 331.8L567.0 335.5L564.1 338.3L560.8 340.5L559.9 343.8L558.2 346.8L555.5 343.9L551.8 342.9L548.2 341.8M574.5 275.5L576.4 274.9L576.8 280.5L574.8 281.8L574.5 275.5M565.1 256.8L569.5 255.5L571.4 260.5L567.0 261.1M575.8 290.5L578.1 293.7L580.8 296.8L578.2 299.2L577.0 295.5M568.3 253.9L565.8 258.9L569.5 261.4L572.0 266.4L577.0 270.1L574.5 272.6L580.8 273.9L582.0 280.1L581.3 283.9L578.3 286.4L582.0 287.6L586.5 287.3L590.8 286.4L595.8 285.1L593.3 281.4L588.3 277.6M588.3 262.6L593.3 261.4L594.3 264.6L595.8 267.6L596.3 271.1L598.3 273.9L602.0 278.9L604.5 282.6L603.3 286.4L598.3 288.9M583.3 292.6L588.3 291.4L593.3 292.6L598.3 295.1L602.0 298.9L599.5 303.9L594.5 307.6L592.0 305.1L585.8 303.9L579.5 303.9L577.0 307.6L573.3 311.4L575.8 316.4L579.5 316.4L582.8 315.3L585.8 313.9L590.8 310.1L594.5 308.9L593.3 313.9L590.8 318.9L589.6 322.7L588.3 326.4L586.8 330.7L585.8 335.1L588.3 340.1L587.0 346.4M570.8 312.6L572.0 317.6L567.0 318.9M560.8 322.6L567.0 321.4L571.5 321.5L575.8 322.6M560.8 327.6L563.7 329.4L567.0 330.1L570.8 328.9L571.9 332.1L573.3 335.1L576.0 337.4L578.3 340.1L573.3 341.4L570.9 344.2L569.5 347.6M554.5 333.9L557.3 336.0L560.8 336.4L564.5 332.6L568.3 336.4L565.6 339.4L562.0 341.4L561.1 344.6L559.5 347.6M577.7 275.8L578.0 281.4L576.0 282.6M565.1 256.8L569.5 255.5L571.4 260.5L567.0 261.1M575.8 290.5L578.2 293.7L580.8 296.8L578.2 299.2L577.0 295.5M537.0 380.5L539.5 385.5L541.3 388.7L543.2 391.8L547.0 396.8L549.6 398.7L552.3 400.5L554.5 403.0L559.5 399.9L562.9 400.0L565.8 398.0L565.1 394.9L570.8 394.9L575.8 393.6L582.0 394.9L585.7 396.0L589.5 396.1L593.3 395.8L597.0 396.8L603.2 397.4L604.5 399.9L602.0 402.0L598.9 403.0L602.0 399.2L604.8 401.3L608.2 401.8L614.5 401.1L618.2 404.2L622.0 406.8L624.5 409.2L622.0 413.0L620.8 418.0L615.8 420.5L610.8 423.6L613.2 425.5L610.8 430.5L608.2 435.5L608.2 441.0M542.0 358.0L545.6 359.7L549.5 360.5L552.3 362.6L555.8 363.0L554.1 366.6L553.2 370.5L554.5 367.4L556.7 364.7L558.2 361.8L562.0 363.0L565.8 360.5L572.0 361.1L577.0 361.8L583.2 363.0L586.9 363.6L589.5 366.1L594.5 368.0L598.2 367.6L602.0 368.0L605.8 368.3L609.5 368.6L613.3 368.6L617.0 368.0L622.0 364.9L625.2 365.5L628.2 366.8L632.0 363.0L637.0 359.2L642.0 356.8L645.7 355.4L649.5 354.2L653.3 353.9L657.0 353.0L660.7 355.0L664.5 356.8L666.4 361.8L665.8 366.8L664.2 370.4L663.2 374.2L661.3 378.0L659.5 381.8L658.1 384.9L656.4 388.0L654.5 390.9L653.2 394.2L651.4 398.0L649.5 401.8L647.3 404.5L644.5 406.8L645.8 409.9L642.0 414.2L640.4 417.5L638.2 420.5L635.8 423.6L633.2 426.8L631.4 429.9L629.5 433.0L628.2 437.0L627.0 441.0M670.8 338.0L673.9 339.9L677.0 341.8L682.0 344.2L683.2 350.5L683.2 354.2L683.2 358.0L684.6 362.4L685.8 366.8L687.0 370.0L686.8 373.5L687.6 376.8L687.3 380.5L687.8 384.3L688.2 388.0L687.9 391.3L687.2 394.6L687.0 398.0L686.6 401.5L686.3 404.9L684.5 408.0L683.2 412.4L682.0 416.8L681.2 420.2L679.2 423.3L678.2 426.8L677.5 430.3L677.0 433.9L674.5 436.8L672.0 441.0M694.5 338.0L695.8 344.2L702.0 343.0L708.2 344.2L714.0 345.5M599.5 351.8L603.1 349.6L607.0 348.0L610.9 346.5L614.5 344.2L618.2 342.3L622.0 340.5L625.8 338.0M622.0 349.2L624.9 347.8L627.9 346.8L631.0 346.0L634.0 344.9L637.0 343.6L638.5 347.7L640.1 351.8L635.9 353.3L632.0 355.5L628.2 356.6L624.5 358.0M592.0 361.8L595.7 361.1L599.5 360.6L603.2 359.9L604.5 364.9L600.7 365.1L597.0 365.9L593.2 366.8L592.0 361.8M605.8 364.2L607.2 361.2L608.2 358.0L609.1 361.4L609.5 364.9M613.9 356.8L617.3 358.0L620.8 359.2L619.5 362.4L614.5 361.8L613.9 356.8M548.2 341.8L551.1 345.1L554.5 348.0L558.2 344.2L559.6 348.0L560.8 351.8L565.8 350.5L567.9 347.4L569.4 344.0L570.8 340.5L577.0 339.2M574.5 350.5L575.8 355.5L573.1 357.8L570.8 360.5L567.6 359.3L564.5 358.0L568.2 356.0L571.4 353.2L574.5 350.5M584.5 345.5L587.0 341.8L588.2 346.8L584.5 345.5M540.8 363.0L542.0 364.9L545.8 366.8L549.5 368.6L553.2 370.5M673.9 420.5L677.0 423.0M395.8 190.2L397.6 194.9L399.9 197.6L402.0 200.5L405.8 204.9L408.2 209.2L410.7 211.8L413.2 214.2L415.8 218.0L417.1 222.7L420.8 226.1L424.5 229.9L427.1 232.3L429.5 234.9L432.0 239.2L437.0 243.0L435.8 244.9L439.5 249.9L441.7 252.4L444.5 254.2L446.7 257.1L449.5 259.2L453.2 263.6L455.8 263.0L459.5 259.2L462.0 254.2L464.5 249.9L466.8 246.1L465.0 243.3L463.2 240.5L459.5 236.8L457.7 233.8L457.0 230.5L455.1 224.9L455.8 219.9L459.5 219.2L464.5 215.5L468.3 215.5L472.0 215.2L472.8 218.5L473.9 221.8L475.8 218.6L478.2 221.8L478.2 219.2L482.0 221.1L485.8 221.8L489.5 221.1L494.5 221.1L499.5 224.2L503.2 228.0L504.0 231.3L505.8 234.2L506.0 238.1L507.0 241.8L507.0 245.5L507.0 249.2L506.9 253.7L507.6 258.0L508.3 262.4L509.5 266.8L510.3 270.5L511.4 274.2L511.3 277.6L511.4 281.0M400.1 213.6L403.2 215.5L404.5 219.2L408.2 222.4L410.2 225.1L412.0 228.0L415.8 233.0L419.5 236.8L421.4 240.5L420.1 237.4L423.2 240.5L423.9 245.5L425.8 248.2L428.2 250.5L432.0 254.2L434.5 258.0L438.2 261.8L442.0 266.8L445.8 269.9L448.2 275.5L450.6 278.0L452.0 281.0M401.4 233.0L405.8 231.8L407.0 236.1L410.8 239.2L413.2 244.2L417.0 248.0L420.8 253.0L424.5 257.4L428.2 260.5L427.0 265.5L429.5 270.5L433.2 273.0L432.0 274.2L435.8 278.0L438.2 281.0M391.8 240.1L394.5 243.0L397.0 248.0L399.7 250.3L402.0 253.0L405.8 256.8L407.0 260.5L410.8 264.2L414.5 266.8L414.5 270.5L418.2 274.2L419.8 277.6L421.4 281.0M381.8 243.9L385.8 246.8L388.2 251.8L392.0 255.5L395.8 259.2L399.5 264.2L403.2 269.2L407.0 274.2L410.8 278.0L413.2 281.0M364.5 255.5L368.9 256.8L370.5 259.7L370.8 263.0L374.5 265.5L378.2 269.2L382.0 271.8L383.2 275.5L387.0 278.0L390.8 281.0M384.5 275.0L387.2 278.2L389.5 281.8L392.0 286.8L397.0 290.5L402.0 294.2L404.5 299.2L408.2 303.0L412.0 306.8L413.2 310.5L417.0 314.2L419.5 318.0L424.5 321.8L428.2 325.5L427.0 328.0L432.0 331.8L435.8 336.8L439.5 340.5L443.2 345.5L444.5 349.2L449.5 351.8L453.2 356.8L457.0 360.5L460.8 365.5L464.0 367.3L465.8 370.5L469.5 375.5L471.7 378.1L473.2 381.0M407.0 321.1L408.2 325.5L412.0 329.2L414.5 334.2L418.2 338.0L422.0 343.0L424.5 348.0L427.0 353.0L429.5 358.0L430.8 363.0L432.0 368.0L430.8 373.0L430.1 378.0M410.8 321.1L414.5 325.5L418.2 330.5L419.5 333.0L423.2 334.2L427.0 339.2L430.8 344.2L434.5 349.2L436.8 352.0L439.5 354.2L442.0 358.0L447.0 361.8L450.8 366.8L452.0 370.5L455.8 374.2L458.2 379.2L460.8 381.0M409.5 275.0L411.1 278.5L413.2 281.8L413.2 284.2L418.2 288.0L422.0 293.0L424.5 298.0L429.5 301.8L432.0 306.8L434.5 309.2L437.0 311.8L439.5 315.5L442.1 317.9L444.5 320.5L445.8 324.2L449.5 328.0L453.2 331.8L455.8 335.5L458.4 337.5L459.2 341.1L462.0 343.0L464.5 348.0L467.0 351.8L469.5 354.2L470.5 357.5L472.0 360.5L475.8 365.5L479.5 370.5L480.9 373.9L483.2 376.8L485.8 381.0M420.1 275.0L422.7 278.1L424.5 281.8L429.5 285.5L432.0 290.5L434.5 295.5L438.2 300.5L442.0 304.2L444.5 309.2L448.2 311.8L452.0 315.5L455.8 318.0L454.5 321.8L458.2 325.5L460.8 324.2L459.5 328.0L463.2 331.8M437.0 275.0L437.7 279.0L438.2 283.0L439.5 286.8L443.2 291.8L447.0 296.8L450.8 301.8L454.5 305.5L458.2 310.5L462.0 314.2L463.2 318.0L467.0 323.0L469.5 326.8L475.8 327.4L479.5 330.5L483.2 335.5L487.0 340.5L490.8 345.5L493.2 350.5L495.8 354.2L499.3 355.3L502.0 358.0L507.0 358.0L506.4 361.8L508.2 365.5L507.0 370.5L509.5 375.5L512.0 381.0M449.5 275.0L451.0 279.2L453.2 283.0L457.0 286.8L459.5 291.8L464.5 294.2L465.8 298.0L469.5 303.0L473.2 306.8L475.4 309.6L478.2 311.8L482.0 316.8L485.1 318.2L487.0 321.1L489.3 323.5L492.0 325.5L495.8 330.5L498.4 333.2L499.5 336.8L503.2 341.8L507.0 346.8L510.2 349.3L512.0 353.0L514.9 355.8L517.0 359.2L514.5 364.2L517.8 365.9L520.8 368.0L524.5 373.0L527.5 375.0L529.5 378.0L532.0 381.0M469.5 329.2L473.2 328.0L477.0 330.5L479.5 333.6L482.0 336.8L485.8 341.8L489.5 345.5L492.0 349.2L493.2 355.5L497.0 358.0L499.4 360.6L502.0 363.0L499.5 368.0L495.8 370.5L492.7 369.0L489.5 368.0L487.3 364.1L484.5 360.5L483.2 356.8M511.4 275.0L511.0 278.6L511.6 282.1L512.6 285.5L513.5 288.8L513.3 292.2L513.2 295.5L513.8 298.8L513.8 302.2L513.2 305.5L513.3 308.8L513.2 312.2L513.2 315.5L512.6 321.8L511.1 324.8L510.1 328.0L507.0 332.4L504.5 333.0L508.2 334.2L509.5 338.0L513.2 343.0L515.8 345.5L514.5 348.0L518.2 351.8L522.0 355.5L525.8 360.5L529.5 365.5L533.2 369.2L537.0 374.2L539.0 377.3L539.5 381.0M473.9 344.2L475.1 346.1L475.8 344.9M428.2 373.0L430.1 377.2L430.8 381.8L434.5 385.5L435.1 390.5L437.0 395.5L435.8 400.5L433.2 403.0L434.5 409.2L435.1 415.5L434.5 420.5L438.2 423.0L438.9 428.0L440.8 433.0L439.5 438.0L438.2 443.0L439.5 449.2L437.6 454.2L435.8 458.0L432.0 461.1L430.8 463.0L434.5 465.5L439.5 466.1L444.5 465.5L447.0 463.6L452.0 464.2L455.8 466.8L458.2 468.0L461.7 467.1L465.1 466.0L468.5 465.0L472.0 464.2L475.8 460.5L479.5 456.8L482.0 454.2L484.5 451.8L489.5 448.6L494.5 446.8L498.2 443.0L499.5 439.2L497.6 434.2L495.7 431.3L494.5 428.0L493.6 424.7L492.0 421.8L490.6 418.5L488.9 415.5L487.6 411.8L484.5 410.5L482.0 405.5L479.5 400.5L477.0 395.5L473.2 391.8L469.5 388.0L467.0 384.2L463.2 380.5L459.5 378.0M479.5 385.5L482.0 388.3L484.5 391.1L485.8 385.5M500.8 464.2L500.6 467.7L500.1 471.1L494.5 471.5M422.0 394.2L423.2 399.2L427.0 401.8L433.2 401.1L437.0 398.0L435.8 393.0L432.6 392.1L429.5 391.1L426.3 393.9L422.0 394.2M425.8 396.8L429.5 399.2L434.5 398.0M408.9 405.5L411.6 403.7L414.5 402.4L415.1 401.1M443.9 398.0L445.1 400.5L442.6 399.9L443.9 398.0M425.8 414.2L427.0 416.8L424.5 419.2L422.0 418.0M418.2 435.5L420.5 435.2M477.0 438.0L478.9 440.5L475.8 444.2L472.0 446.1L467.0 447.4M497.0 378.0L499.5 380.5L502.0 383.0L505.0 385.0L507.0 388.0L509.4 390.6L512.0 393.0L515.8 398.0L518.2 403.0L520.1 406.2L522.0 409.2L525.0 411.9L527.0 415.5L529.6 418.5L532.0 421.8L532.6 428.0L533.1 431.7L533.2 435.5L534.3 439.3L535.8 443.0L536.1 446.8L537.0 450.5L537.6 454.2L538.2 458.0L538.7 461.8L538.2 465.5L538.3 469.2L538.2 473.0L538.6 477.0L538.9 481.0M509.5 378.0L511.7 381.4L514.5 384.2L516.9 387.5L519.5 390.5L521.7 393.4L523.2 396.8L527.0 401.8L530.8 406.8L533.2 409.5L534.5 413.0L538.2 418.0L539.7 421.1L540.8 424.2L542.3 427.2L543.2 430.5L545.0 433.4L545.8 436.8L547.1 439.9L548.2 443.0M527.0 378.0L530.8 381.8L530.8 385.5L532.2 388.5L533.2 391.8L534.4 395.5L535.8 399.2L539.5 404.2L543.2 409.2L544.9 412.5L547.0 415.5L549.1 418.5L550.8 421.8M519.5 408.0L521.2 411.3L524.5 413.0L527.1 415.4L529.5 418.0L532.0 420.5L531.4 426.8L531.8 430.0L533.2 433.0L534.1 436.1L535.1 439.2L535.5 442.5L537.0 445.5L537.6 451.8L537.4 458.0L538.6 462.1L537.9 466.3L537.6 470.5L537.7 474.9L538.0 479.2L537.0 484.2L537.6 488.0L535.8 493.0L537.0 498.0L535.1 503.0L533.9 505.5L535.8 508.0L534.5 511.0M532.0 408.0L534.5 413.0L538.2 415.5L540.8 420.5L542.0 425.5L543.9 430.5L545.1 436.8L547.0 441.8L548.2 446.8L548.9 450.0L550.1 453.0L549.3 456.8L550.8 460.5L550.5 464.2L550.5 468.0L550.0 472.4L550.8 476.8L555.1 479.2L551.4 481.8L551.4 488.0L549.5 491.8L548.2 496.8L547.6 503.0L549.5 505.5L545.8 508.0L545.1 511.0M542.0 408.0L545.8 413.0L548.9 411.8L550.1 416.8L552.0 421.8L553.2 428.0L554.1 431.3L555.8 434.2L556.2 437.5L557.6 440.5L558.6 443.7L560.1 446.8L560.8 451.8L562.0 456.8L560.1 461.8L560.8 466.8L562.0 473.0L562.0 479.2L565.2 480.4L568.2 481.8L564.5 483.0L563.9 488.0L563.2 494.2L562.0 499.2L561.4 504.2L558.9 505.5L558.9 511.0M624.5 408.0L622.0 413.0L618.2 418.0L615.0 419.3L612.0 421.1L610.8 423.6L613.2 426.8L610.8 431.8L608.9 436.8L607.0 441.8L604.3 445.3L600.8 448.0L601.4 451.1L598.2 455.5L596.4 460.5L593.9 465.5L590.8 470.5L589.5 473.0L588.2 477.4L588.9 479.2L585.8 480.3L583.2 482.4L585.8 483.0L586.4 486.8L583.2 490.5L582.0 494.2L579.5 496.8L578.2 501.1L574.5 500.5L573.2 504.2L574.1 507.6L573.9 511.0M646.4 408.6L643.2 413.0L639.5 418.0L635.8 423.0L632.0 428.0L628.9 433.0L627.0 438.0L624.5 443.0L622.8 446.1L621.4 449.2L619.4 452.1L619.5 455.5L617.6 460.5L616.2 463.7L614.5 466.8L612.0 470.5L609.5 475.5L607.0 480.5L605.1 485.5L602.6 490.5L600.1 495.5L597.6 500.5L595.8 505.5L594.5 511.0M534.5 511.0L533.2 513.0L530.8 515.5L529.5 519.2L525.8 521.8L524.5 524.9L523.2 527.4L522.6 525.5M545.1 511.0L547.0 510.5L550.1 513.0L547.6 516.8L546.4 520.5L543.2 524.2L541.4 528.0L542.0 531.8L538.9 534.9L536.4 538.0L533.9 541.1L537.0 544.2L537.0 547.4L532.0 545.5L525.8 544.2L520.8 542.4L522.0 545.5L525.8 548.0L529.5 550.5L533.2 554.9L537.6 558.0L542.0 558.6L545.8 560.5L549.5 558.0L549.5 554.9L546.4 552.4L547.0 548.0L548.2 544.2L550.1 540.5L552.0 538.0L553.9 534.2L555.8 530.5L558.2 526.8L560.1 523.0L562.0 520.5L564.5 519.2L560.8 516.8L558.9 513.0L558.9 511.0M517.0 555.5L518.9 561.1L521.4 559.2L522.0 556.1M573.9 511.0L572.0 513.0L568.9 516.8L570.1 519.2L574.5 521.1L576.4 524.2L575.1 526.8L577.0 526.8L573.9 529.2L572.0 533.0L569.5 536.8L567.0 540.5L564.5 543.6L563.2 546.8L562.0 550.5L560.1 554.9L558.2 559.2L559.5 563.0M594.5 511.0L594.5 513.0L592.0 513.6L591.4 519.2L588.2 523.0L586.4 526.1L589.5 528.0L592.0 529.2L588.2 533.0L585.8 536.8L583.9 540.5L582.0 545.5L579.5 548.0L578.9 551.8L579.5 555.5L578.2 559.2L575.8 563.0L575.1 566.8L573.2 570.5L575.7 573.0L578.2 575.5L582.0 579.9M559.5 570.5L557.0 573.0L553.2 576.1L550.1 578.6L547.0 580.5L545.8 576.1L543.2 573.6L542.0 570.5L538.2 568.6L534.5 569.9L530.8 570.5L528.9 575.5L527.0 578.6L528.9 581.8L531.4 583.0L537.0 580.5L538.9 579.2M518.2 576.5L520.8 579.9M537.0 586.8L537.6 590.5L538.2 595.5L542.0 598.0L546.4 598.7L550.8 598.2L552.6 594.2L557.0 593.6L562.0 594.2L560.1 598.0L557.0 598.6L553.2 597.4M555.1 586.1L560.1 588.0L559.5 589.9L555.8 588.6L555.1 586.1M562.0 591.1L565.1 593.0L565.1 597.4L562.6 597.4L562.0 591.1M563.2 590.5L568.2 590.5L570.8 588.0L573.2 585.5L577.0 584.2L580.8 581.8L583.2 577.4L580.8 576.5L578.2 578.0M522.0 589.9L525.8 590.5L526.4 588.0M430.0 153.8L430.5 154.2M688.2 463.0L691.4 460.5L694.5 458.0M672.0 445.0L674.4 442.4L677.0 440.0" fill="none" stroke="#d2d2d2" stroke-width="1" shape-rendering="crispEdges"/>
</svg>
</body></html>
